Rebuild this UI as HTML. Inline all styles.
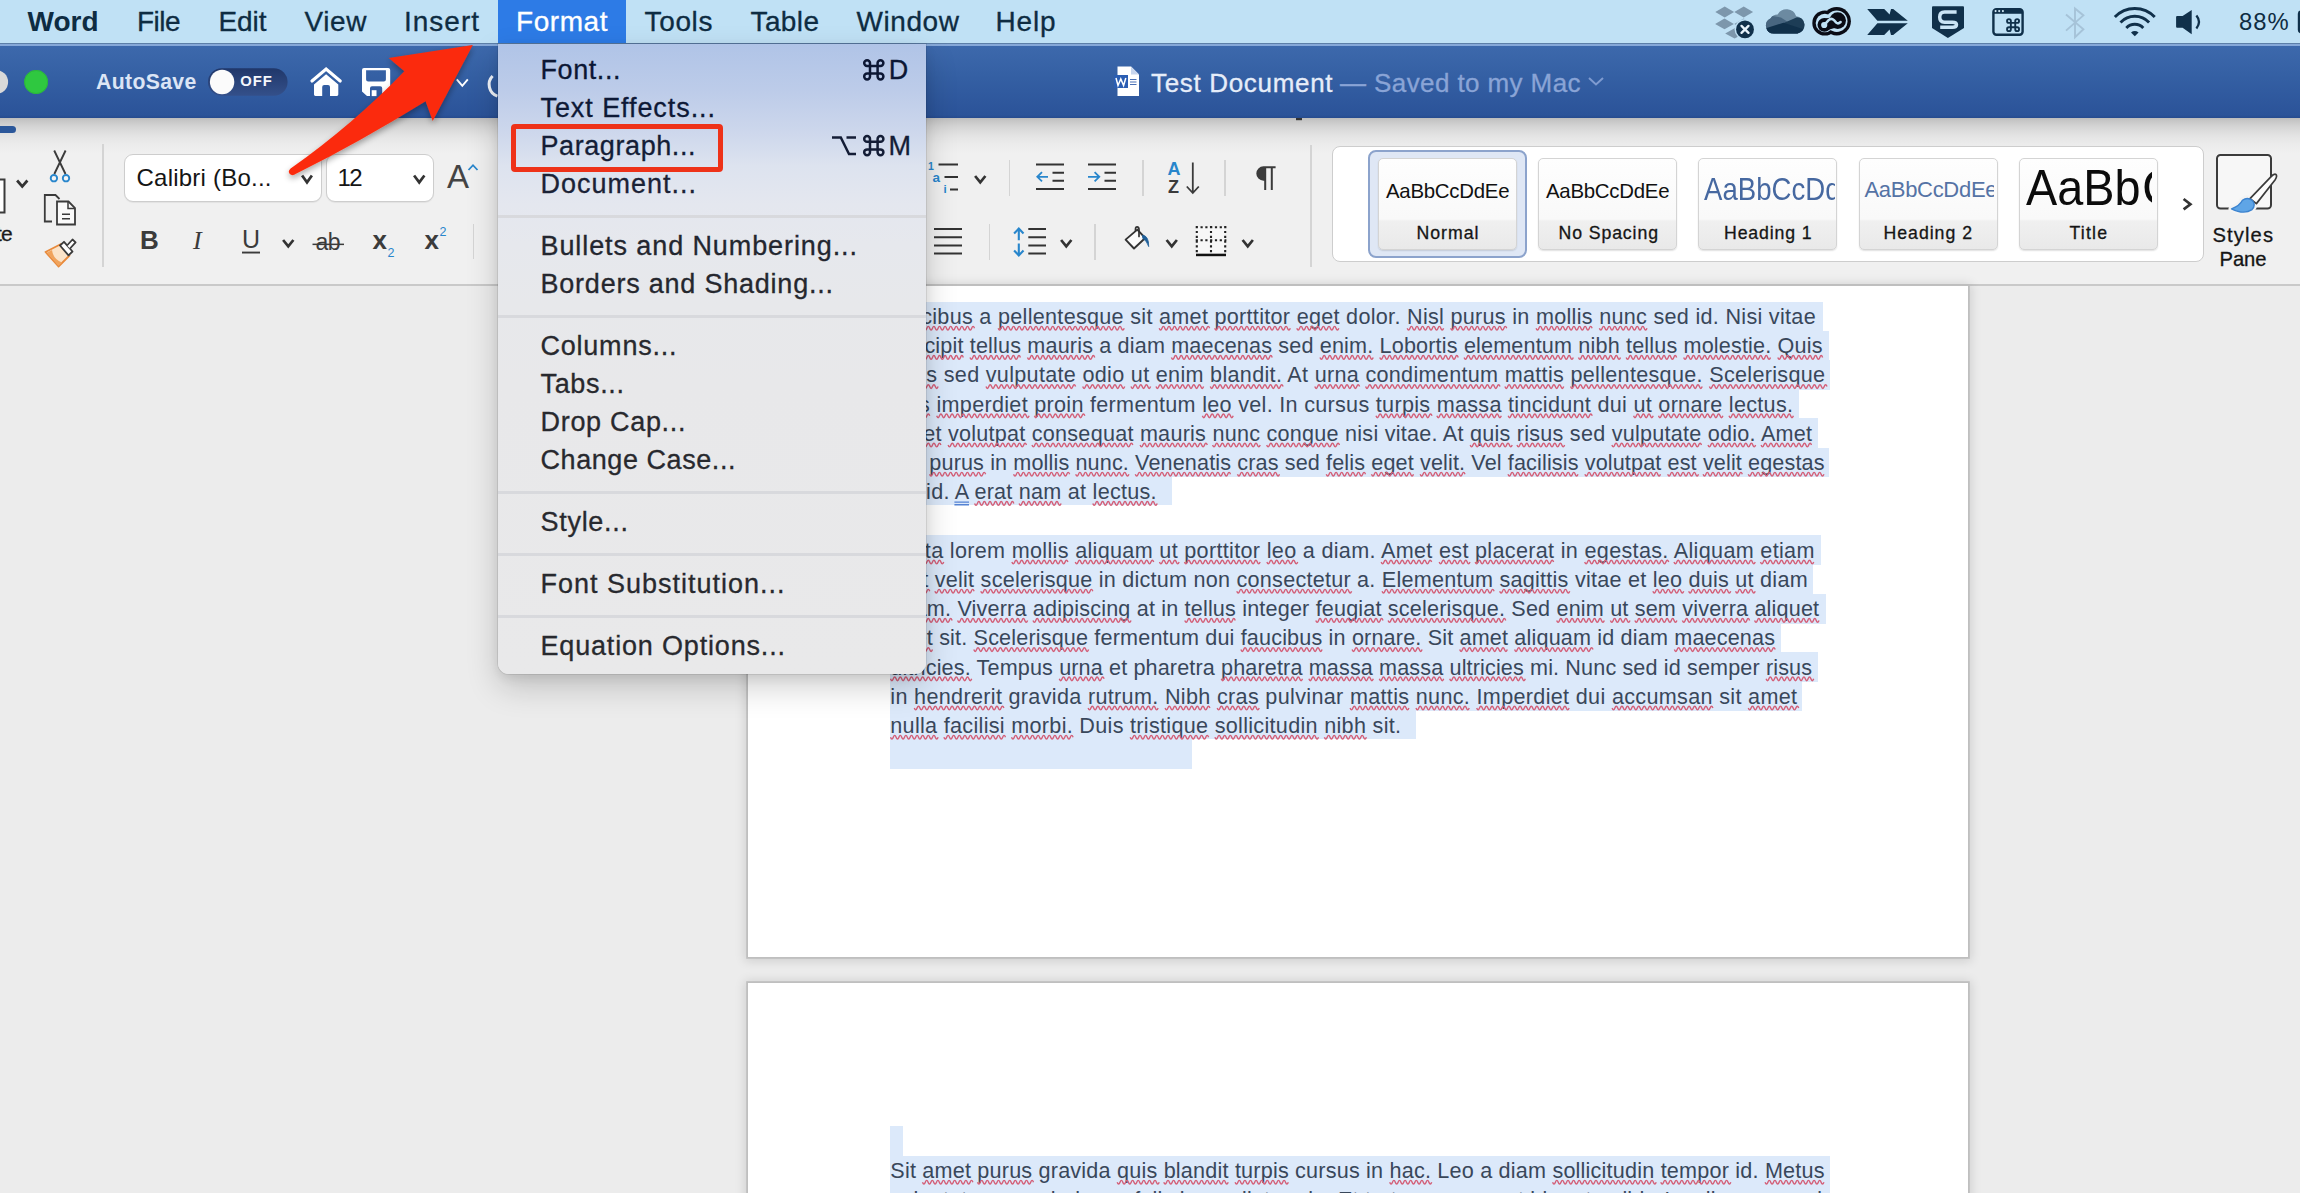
<!DOCTYPE html>
<html lang="en">
<head>
<meta charset="utf-8">
<title>Word - Format menu</title>
<style>
html,body{margin:0;padding:0}
html{width:2300px;height:1193px;overflow:hidden}
body{width:2300px;height:1193px;position:relative;overflow:hidden;background:#ececec;font-family:"Liberation Sans",sans-serif;color:#111}
.abs{position:absolute}
.t{position:absolute;white-space:pre;line-height:1;display:block}
.hv{-webkit-text-stroke:.3px currentColor}
svg{position:absolute;left:0;top:0;overflow:visible}
/* ---------- mac menu bar ---------- */
#menubar{left:0;top:0;width:2300px;height:43px;background:#c0e1f5}
#mb-line1{left:0;top:43px;width:2300px;height:1px;background:#5d7fa8}
#mb-line2{left:0;top:44px;width:2300px;height:2px;background:#86a8d8}
#fmt-hl{left:498px;top:0;width:128px;height:43px;background:#2d7be6}
/* ---------- word title bar ---------- */
#titlebar{left:0;top:46px;width:2300px;height:72px;background:linear-gradient(#3d69ac 0,#345fa3 45%,#2b5399 96%,#264b8e 100%)}
/* ---------- ribbon ---------- */
#ribbon{left:0;top:118px;width:2300px;height:166px;background:linear-gradient(#bdbdbd 0,#c7c7c7 3px,#d3d3d3 8px,#dedede 14px,#e6e6e6 20px,#ececec 27px,#f0f0f0 36px,#f0f0f0 100%)}
#ribbon-line{left:0;top:284px;width:2300px;height:2px;background:#c9c9c9}
.vdiv{position:absolute;width:2px;background:#d4d4d4}
.combo{position:absolute;background:#fff;border:1.5px solid #cdcdcd;border-radius:9px;box-sizing:border-box;box-shadow:0 1px 1px rgba(0,0,0,.06)}
/* ---------- styles gallery ---------- */
#gallery{left:1332px;top:146px;width:872px;height:116px;background:#fff;border:1.5px solid #cdcdcd;border-radius:8px;box-sizing:border-box}
.card{position:absolute;top:158px;width:139px;height:92px;box-sizing:border-box;border:1px solid #d4d4d4;border-radius:5px;background:linear-gradient(#fefefe 0,#f9f9f9 60px,#f0f0f0 62px,#e9e9e9 100%);box-shadow:0 1px 1.5px rgba(0,0,0,.12);overflow:hidden}
#card-ring{left:1368px;top:150px;width:159px;height:108px;box-sizing:border-box;border:2px solid #8ca3cc;border-radius:8px;background:#dfe7f5}
/* ---------- document ---------- */
.page{position:absolute;background:#fff;box-shadow:0 0 0 1.8px #bfbfbf,0 1px 10px 3px rgba(0,0,0,.13)}
.hl{position:absolute;background:#dce9fa}
.doc{color:#39475a}
.doc u{text-decoration:none}
/* ---------- dropdown menu ---------- */
#menu{left:498px;top:44px;width:428px;height:630px;border-radius:0 0 11px 11px;
 background:linear-gradient(#b0c4e7 0,#bdcce9 48px,#cdd7ec 88px,#dde3ef 122px,#e4e7ef 160px,#e6e8ed 200px,#e7e8eb 260px,#e8e8ea 340px,#e9e9ea 100%);
 box-shadow:0 0 0 1px rgba(0,0,0,.08),0 13px 32px rgba(0,0,0,.19),0 4px 11px rgba(0,0,0,.08)}
.sep{position:absolute;left:498px;width:428px;height:3.6px;background:#d8d9dd;margin-top:-.4px}
#redbox{left:511px;top:124px;width:212px;height:48px;box-sizing:border-box;border:5.5px solid #ee3219;border-radius:4px}
</style>
</head>
<body>

<!-- ================= BASE LAYERS ================= -->
<div id="menubar" class="abs"></div>
<div id="fmt-hl" class="abs"></div>
<div id="mb-line1" class="abs"></div>
<div id="mb-line2" class="abs"></div>
<div id="titlebar" class="abs"></div>
<div id="ribbon" class="abs"></div>
<div id="ribbon-line" class="abs"></div>

<!-- ================= DOCUMENT ================= -->
<div class="abs" style="left:0;top:0;width:2300px;height:1193px;overflow:hidden">
<div class="page" style="left:748px;top:286px;width:1220px;height:671px"></div>
<div class="page" style="left:748px;top:983px;width:1220px;height:230px"></div>

<div class="hl" style="left:890px;top:301.6px;width:933.0px;height:29.8px"></div>
<div class="hl" style="left:890px;top:330.8px;width:939.0px;height:29.8px"></div>
<div class="hl" style="left:890px;top:360.0px;width:940.0px;height:29.8px"></div>
<div class="hl" style="left:890px;top:389.2px;width:909.0px;height:29.8px"></div>
<div class="hl" style="left:890px;top:418.4px;width:928.0px;height:29.8px"></div>
<div class="hl" style="left:890px;top:447.6px;width:939.0px;height:29.8px"></div>
<div class="hl" style="left:890px;top:476.8px;width:282.0px;height:28.2px"></div>
<span class="t" style="left:890.30px;top:305.90px;font-size:21.6px;color:#39475a;letter-spacing:0.292px;"><span class="doc"><u>faucibus</u> a <u>pellentesque</u> sit <u>amet</u> <u>porttitor</u> <u>eget</u> dolor. <u>Nisl</u> <u>purus</u> in <u>mollis</u> <u>nunc</u> sed id. Nisi vitae</span></span>
<span class="t" style="left:890.30px;top:335.10px;font-size:21.6px;color:#39475a;letter-spacing:0.162px;"><span class="doc"><u>suscipit</u> <u>tellus</u> <u>mauris</u> a diam <u>maecenas</u> sed <u>enim.</u> <u>Lobortis</u> <u>elementum</u> <u>nibh</u> <u>tellus</u> <u>molestie.</u> <u>Quis</u></span></span>
<span class="t" style="left:890.30px;top:364.30px;font-size:21.6px;color:#39475a;letter-spacing:0.305px;"><span class="doc"><u>risus</u> sed <u>vulputate</u> <u>odio</u> <u>ut</u> <u>enim</u> <u>blandit.</u> At <u>urna</u> <u>condimentum</u> <u>mattis</u> <u>pellentesque.</u> <u>Scelerisque</u></span></span>
<span class="t" style="left:890.30px;top:393.50px;font-size:21.6px;color:#39475a;letter-spacing:0.294px;"><span class="doc"><u>felis</u> <u>imperdiet</u> <u>proin</u> fermentum <u>leo</u> vel. In cursus <u>turpis</u> <u>massa</u> <u>tincidunt</u> dui <u>ut</u> <u>ornare</u> <u>lectus.</u></span></span>
<span class="t" style="left:890.30px;top:422.70px;font-size:21.6px;color:#39475a;letter-spacing:0.245px;"><span class="doc"><u>Amet</u> <u>volutpat</u> <u>consequat</u> <u>mauris</u> <u>nunc</u> <u>congue</u> nisi vitae. At <u>quis</u> <u>risus</u> sed <u>vulputate</u> <u>odio.</u> <u>Amet</u></span></span>
<span class="t" style="left:890.30px;top:451.90px;font-size:21.6px;color:#39475a;letter-spacing:0.130px;"><span class="doc">nisl <u>purus</u> in <u>mollis</u> <u>nunc.</u> <u>Venenatis</u> <u>cras</u> sed <u>felis</u> <u>eget</u> <u>velit.</u> Vel <u>facilisis</u> <u>volutpat</u> <u>est</u> <u>velit</u> <u>egestas</u></span></span>
<span class="t" style="left:890.30px;top:481.10px;font-size:21.6px;color:#39475a;letter-spacing:0.245px;"><span class="doc">dui id. <u class="g">A</u> <u>erat</u> <u>nam</u> at <u>lectus.</u></span></span>
<div class="hl" style="left:890px;top:535.4px;width:931.0px;height:29.8px"></div>
<div class="hl" style="left:890px;top:564.6px;width:923.0px;height:29.8px"></div>
<div class="hl" style="left:890px;top:593.8px;width:936.0px;height:29.8px"></div>
<div class="hl" style="left:890px;top:623.0px;width:891.0px;height:29.8px"></div>
<div class="hl" style="left:890px;top:652.2px;width:928.0px;height:29.8px"></div>
<div class="hl" style="left:890px;top:681.4px;width:912.0px;height:29.8px"></div>
<div class="hl" style="left:890px;top:710.6px;width:526.0px;height:28.2px"></div>
<span class="t" style="left:890.30px;top:539.70px;font-size:21.6px;color:#39475a;letter-spacing:0.317px;"><span class="doc"><u>Porta</u> lorem <u>mollis</u> <u>aliquam</u> <u>ut</u> <u>porttitor</u> <u>leo</u> a diam. <u>Amet</u> <u>est</u> <u>placerat</u> in <u>egestas.</u> <u>Aliquam</u> <u>etiam</u></span></span>
<span class="t" style="left:890.30px;top:568.90px;font-size:21.6px;color:#39475a;letter-spacing:0.242px;"><span class="doc"><u>erat</u> <u>velit</u> <u>scelerisque</u> in dictum non <u>consectetur</u> a. <u>Elementum</u> <u>sagittis</u> vitae et <u>leo</u> <u>duis</u> <u>ut</u> diam</span></span>
<span class="t" style="left:890.30px;top:598.10px;font-size:21.6px;color:#39475a;letter-spacing:0.173px;"><span class="doc"><u>quam.</u> <u>Viverra</u> <u>adipiscing</u> at in <u>tellus</u> integer <u>feugiat</u> <u>scelerisque.</u> Sed <u>enim</u> <u>ut</u> <u>sem</u> <u>viverra</u> <u>aliquet</u></span></span>
<span class="t" style="left:890.30px;top:627.30px;font-size:21.6px;color:#39475a;letter-spacing:0.164px;"><span class="doc"><u>eget</u> sit. <u>Scelerisque</u> fermentum dui <u>faucibus</u> in <u>ornare.</u> Sit <u>amet</u> <u>aliquam</u> id diam <u>maecenas</u></span></span>
<span class="t" style="left:890.30px;top:656.50px;font-size:21.6px;color:#39475a;letter-spacing:0.133px;"><span class="doc"><u>ultricies.</u> Tempus <u>urna</u> et pharetra <u>pharetra</u> <u>massa</u> <u>massa</u> <u>ultricies</u> mi. Nunc sed id semper <u>risus</u></span></span>
<span class="t" style="left:890.30px;top:685.70px;font-size:21.6px;color:#39475a;letter-spacing:0.322px;"><span class="doc">in <u>hendrerit</u> gravida <u>rutrum.</u> <u>Nibh</u> <u>cras</u> pulvinar <u>mattis</u> <u>nunc.</u> <u>Imperdiet</u> dui <u>accumsan</u> sit <u>amet</u></span></span>
<span class="t" style="left:890.30px;top:714.90px;font-size:21.6px;color:#39475a;letter-spacing:0.300px;"><span class="doc"><u>nulla</u> <u>facilisi</u> <u>morbi.</u> Duis <u>tristique</u> <u>sollicitudin</u> <u>nibh</u> sit.</span></span>
<div class="hl" style="left:890px;top:738.5px;width:302px;height:30px"></div>
<div class="hl" style="left:890px;top:1126px;width:13px;height:30px"></div>
<div class="hl" style="left:890px;top:1155.6px;width:940.0px;height:29.8px"></div>
<div class="hl" style="left:890px;top:1184.8px;width:940.0px;height:29.8px"></div>
<span class="t" style="left:890.30px;top:1159.90px;font-size:21.6px;color:#39475a;letter-spacing:0.201px;"><span class="doc">Sit <u>amet</u> <u>purus</u> gravida <u>quis</u> <u>blandit</u> <u>turpis</u> cursus in <u>hac.</u> Leo a diam <u>sollicitudin</u> <u>tempor</u> id. <u>Metus</u></span></span>
<span class="t" style="left:890.30px;top:1189.10px;font-size:21.6px;color:#39475a;letter-spacing:0.197px;"><span class="doc"><u>vulputate</u> eu <u>scelerisque</u> <u>felis</u> <u>imperdiet</u> <u>proin.</u> Et <u>tortor</u> <u>consequat</u> id <u>porta</u> <u>nibh.</u> <u>Iaculis</u> <u>nunc</u> sed</span></span>
<svg width="2300" height="1193" viewBox="0 0 2300 1193"><path d="M890.5 328.2q1.40 3.7 2.8 0t2.8 0t2.8 0t2.8 0t2.8 0t2.8 0t2.8 0t2.8 0t2.8 0t2.8 0t2.8 0t2.8 0t2.8 0t2.8 0t2.8 0t2.8 0t2.8 0t2.8 0t2.8 0t2.8 0t2.8 0t2.8 0t2.8 0t2.8 0t2.8 0t2.8 0t2.8 0t2.8 0t2.8 0t2.8 0M998.2 328.2q1.40 3.7 2.8 0t2.8 0t2.8 0t2.8 0t2.8 0t2.8 0t2.8 0t2.8 0t2.8 0t2.8 0t2.8 0t2.8 0t2.8 0t2.8 0t2.8 0t2.8 0t2.8 0t2.8 0t2.8 0t2.8 0t2.8 0t2.8 0t2.8 0t2.8 0t2.8 0t2.8 0t2.8 0t2.8 0t2.8 0t2.8 0t2.8 0t2.8 0t2.8 0t2.8 0t2.8 0t2.8 0t2.8 0t2.8 0t2.8 0t2.8 0t2.8 0t2.8 0t2.8 0t2.8 0t2.8 0M1159.2 328.2q1.40 3.7 2.8 0t2.8 0t2.8 0t2.8 0t2.8 0t2.8 0t2.8 0t2.8 0t2.8 0t2.8 0t2.8 0t2.8 0t2.8 0t2.8 0t2.8 0t2.8 0t2.8 0t2.8 0M1214.7 328.2q1.40 3.7 2.8 0t2.8 0t2.8 0t2.8 0t2.8 0t2.8 0t2.8 0t2.8 0t2.8 0t2.8 0t2.8 0t2.8 0t2.8 0t2.8 0t2.8 0t2.8 0t2.8 0t2.8 0t2.8 0t2.8 0t2.8 0t2.8 0t2.8 0t2.8 0t2.8 0t2.8 0t2.8 0M1296.8 328.2q1.40 3.7 2.8 0t2.8 0t2.8 0t2.8 0t2.8 0t2.8 0t2.8 0t2.8 0t2.8 0t2.8 0t2.8 0t2.8 0t2.8 0t2.8 0t2.8 0M1407.2 328.2q1.40 3.7 2.8 0t2.8 0t2.8 0t2.8 0t2.8 0t2.8 0t2.8 0t2.8 0t2.8 0t2.8 0t2.8 0t2.8 0t2.8 0M1450.7 328.2q1.40 3.7 2.8 0t2.8 0t2.8 0t2.8 0t2.8 0t2.8 0t2.8 0t2.8 0t2.8 0t2.8 0t2.8 0t2.8 0t2.8 0t2.8 0t2.8 0t2.8 0t2.8 0t2.8 0t2.8 0t2.8 0M1536.1 328.2q1.40 3.7 2.8 0t2.8 0t2.8 0t2.8 0t2.8 0t2.8 0t2.8 0t2.8 0t2.8 0t2.8 0t2.8 0t2.8 0t2.8 0t2.8 0t2.8 0t2.8 0t2.8 0t2.8 0t2.8 0t2.8 0M1599.4 328.2q1.40 3.7 2.8 0t2.8 0t2.8 0t2.8 0t2.8 0t2.8 0t2.8 0t2.8 0t2.8 0t2.8 0t2.8 0t2.8 0t2.8 0t2.8 0t2.8 0t2.8 0t2.8 0M890.5 357.4q1.40 3.7 2.8 0t2.8 0t2.8 0t2.8 0t2.8 0t2.8 0t2.8 0t2.8 0t2.8 0t2.8 0t2.8 0t2.8 0t2.8 0t2.8 0t2.8 0t2.8 0t2.8 0t2.8 0t2.8 0t2.8 0t2.8 0t2.8 0t2.8 0t2.8 0t2.8 0t2.8 0M970.0 357.4q1.40 3.7 2.8 0t2.8 0t2.8 0t2.8 0t2.8 0t2.8 0t2.8 0t2.8 0t2.8 0t2.8 0t2.8 0t2.8 0t2.8 0t2.8 0t2.8 0t2.8 0t2.8 0t2.8 0M1027.5 357.4q1.40 3.7 2.8 0t2.8 0t2.8 0t2.8 0t2.8 0t2.8 0t2.8 0t2.8 0t2.8 0t2.8 0t2.8 0t2.8 0t2.8 0t2.8 0t2.8 0t2.8 0t2.8 0t2.8 0t2.8 0t2.8 0t2.8 0t2.8 0t2.8 0t2.8 0M1171.4 357.4q1.40 3.7 2.8 0t2.8 0t2.8 0t2.8 0t2.8 0t2.8 0t2.8 0t2.8 0t2.8 0t2.8 0t2.8 0t2.8 0t2.8 0t2.8 0t2.8 0t2.8 0t2.8 0t2.8 0t2.8 0t2.8 0t2.8 0t2.8 0t2.8 0t2.8 0t2.8 0t2.8 0t2.8 0t2.8 0t2.8 0t2.8 0t2.8 0t2.8 0t2.8 0t2.8 0t2.8 0t2.8 0M1320.0 357.4q1.40 3.7 2.8 0t2.8 0t2.8 0t2.8 0t2.8 0t2.8 0t2.8 0t2.8 0t2.8 0t2.8 0t2.8 0t2.8 0t2.8 0t2.8 0t2.8 0t2.8 0t2.8 0t2.8 0t2.8 0M1379.8 357.4q1.40 3.7 2.8 0t2.8 0t2.8 0t2.8 0t2.8 0t2.8 0t2.8 0t2.8 0t2.8 0t2.8 0t2.8 0t2.8 0t2.8 0t2.8 0t2.8 0t2.8 0t2.8 0t2.8 0t2.8 0t2.8 0t2.8 0t2.8 0t2.8 0t2.8 0t2.8 0t2.8 0t2.8 0t2.8 0M1464.1 357.4q1.40 3.7 2.8 0t2.8 0t2.8 0t2.8 0t2.8 0t2.8 0t2.8 0t2.8 0t2.8 0t2.8 0t2.8 0t2.8 0t2.8 0t2.8 0t2.8 0t2.8 0t2.8 0t2.8 0t2.8 0t2.8 0t2.8 0t2.8 0t2.8 0t2.8 0t2.8 0t2.8 0t2.8 0t2.8 0t2.8 0t2.8 0t2.8 0t2.8 0t2.8 0t2.8 0t2.8 0t2.8 0t2.8 0t2.8 0t2.8 0M1578.5 357.4q1.40 3.7 2.8 0t2.8 0t2.8 0t2.8 0t2.8 0t2.8 0t2.8 0t2.8 0t2.8 0t2.8 0t2.8 0t2.8 0t2.8 0t2.8 0t2.8 0M1626.2 357.4q1.40 3.7 2.8 0t2.8 0t2.8 0t2.8 0t2.8 0t2.8 0t2.8 0t2.8 0t2.8 0t2.8 0t2.8 0t2.8 0t2.8 0t2.8 0t2.8 0t2.8 0t2.8 0t2.8 0M1683.7 357.4q1.40 3.7 2.8 0t2.8 0t2.8 0t2.8 0t2.8 0t2.8 0t2.8 0t2.8 0t2.8 0t2.8 0t2.8 0t2.8 0t2.8 0t2.8 0t2.8 0t2.8 0t2.8 0t2.8 0t2.8 0t2.8 0t2.8 0t2.8 0t2.8 0t2.8 0t2.8 0t2.8 0t2.8 0t2.8 0t2.8 0t2.8 0t2.8 0M1777.8 357.4q1.40 3.7 2.8 0t2.8 0t2.8 0t2.8 0t2.8 0t2.8 0t2.8 0t2.8 0t2.8 0t2.8 0t2.8 0t2.8 0t2.8 0t2.8 0t2.8 0t2.8 0M890.5 386.6q1.40 3.7 2.8 0t2.8 0t2.8 0t2.8 0t2.8 0t2.8 0t2.8 0t2.8 0t2.8 0t2.8 0t2.8 0t2.8 0t2.8 0t2.8 0t2.8 0t2.8 0t2.8 0M986.0 386.6q1.40 3.7 2.8 0t2.8 0t2.8 0t2.8 0t2.8 0t2.8 0t2.8 0t2.8 0t2.8 0t2.8 0t2.8 0t2.8 0t2.8 0t2.8 0t2.8 0t2.8 0t2.8 0t2.8 0t2.8 0t2.8 0t2.8 0t2.8 0t2.8 0t2.8 0t2.8 0t2.8 0t2.8 0t2.8 0t2.8 0t2.8 0t2.8 0t2.8 0M1082.7 386.6q1.40 3.7 2.8 0t2.8 0t2.8 0t2.8 0t2.8 0t2.8 0t2.8 0t2.8 0t2.8 0t2.8 0t2.8 0t2.8 0t2.8 0t2.8 0t2.8 0M1131.0 386.6q1.40 3.7 2.8 0t2.8 0t2.8 0t2.8 0t2.8 0t2.8 0t2.8 0M1156.0 386.6q1.40 3.7 2.8 0t2.8 0t2.8 0t2.8 0t2.8 0t2.8 0t2.8 0t2.8 0t2.8 0t2.8 0t2.8 0t2.8 0t2.8 0t2.8 0t2.8 0t2.8 0t2.8 0M1210.3 386.6q1.40 3.7 2.8 0t2.8 0t2.8 0t2.8 0t2.8 0t2.8 0t2.8 0t2.8 0t2.8 0t2.8 0t2.8 0t2.8 0t2.8 0t2.8 0t2.8 0t2.8 0t2.8 0t2.8 0t2.8 0t2.8 0t2.8 0t2.8 0t2.8 0t2.8 0t2.8 0t2.8 0M1314.8 386.6q1.40 3.7 2.8 0t2.8 0t2.8 0t2.8 0t2.8 0t2.8 0t2.8 0t2.8 0t2.8 0t2.8 0t2.8 0t2.8 0t2.8 0t2.8 0t2.8 0t2.8 0M1365.6 386.6q1.40 3.7 2.8 0t2.8 0t2.8 0t2.8 0t2.8 0t2.8 0t2.8 0t2.8 0t2.8 0t2.8 0t2.8 0t2.8 0t2.8 0t2.8 0t2.8 0t2.8 0t2.8 0t2.8 0t2.8 0t2.8 0t2.8 0t2.8 0t2.8 0t2.8 0t2.8 0t2.8 0t2.8 0t2.8 0t2.8 0t2.8 0t2.8 0t2.8 0t2.8 0t2.8 0t2.8 0t2.8 0t2.8 0t2.8 0t2.8 0t2.8 0t2.8 0t2.8 0t2.8 0t2.8 0t2.8 0t2.8 0t2.8 0t2.8 0M1504.9 386.6q1.40 3.7 2.8 0t2.8 0t2.8 0t2.8 0t2.8 0t2.8 0t2.8 0t2.8 0t2.8 0t2.8 0t2.8 0t2.8 0t2.8 0t2.8 0t2.8 0t2.8 0t2.8 0t2.8 0t2.8 0t2.8 0t2.8 0M1570.6 386.6q1.40 3.7 2.8 0t2.8 0t2.8 0t2.8 0t2.8 0t2.8 0t2.8 0t2.8 0t2.8 0t2.8 0t2.8 0t2.8 0t2.8 0t2.8 0t2.8 0t2.8 0t2.8 0t2.8 0t2.8 0t2.8 0t2.8 0t2.8 0t2.8 0t2.8 0t2.8 0t2.8 0t2.8 0t2.8 0t2.8 0t2.8 0t2.8 0t2.8 0t2.8 0t2.8 0t2.8 0t2.8 0t2.8 0t2.8 0t2.8 0t2.8 0t2.8 0t2.8 0t2.8 0t2.8 0t2.8 0t2.8 0t2.8 0M1709.4 386.6q1.40 3.7 2.8 0t2.8 0t2.8 0t2.8 0t2.8 0t2.8 0t2.8 0t2.8 0t2.8 0t2.8 0t2.8 0t2.8 0t2.8 0t2.8 0t2.8 0t2.8 0t2.8 0t2.8 0t2.8 0t2.8 0t2.8 0t2.8 0t2.8 0t2.8 0t2.8 0t2.8 0t2.8 0t2.8 0t2.8 0t2.8 0t2.8 0t2.8 0t2.8 0t2.8 0t2.8 0t2.8 0t2.8 0t2.8 0t2.8 0t2.8 0t2.8 0t2.8 0M890.5 415.8q1.40 3.7 2.8 0t2.8 0t2.8 0t2.8 0t2.8 0t2.8 0t2.8 0t2.8 0t2.8 0t2.8 0t2.8 0t2.8 0t2.8 0t2.8 0M936.7 415.8q1.40 3.7 2.8 0t2.8 0t2.8 0t2.8 0t2.8 0t2.8 0t2.8 0t2.8 0t2.8 0t2.8 0t2.8 0t2.8 0t2.8 0t2.8 0t2.8 0t2.8 0t2.8 0t2.8 0t2.8 0t2.8 0t2.8 0t2.8 0t2.8 0t2.8 0t2.8 0t2.8 0t2.8 0t2.8 0t2.8 0t2.8 0t2.8 0t2.8 0t2.8 0M1034.4 415.8q1.40 3.7 2.8 0t2.8 0t2.8 0t2.8 0t2.8 0t2.8 0t2.8 0t2.8 0t2.8 0t2.8 0t2.8 0t2.8 0t2.8 0t2.8 0t2.8 0t2.8 0t2.8 0t2.8 0M1202.4 415.8q1.40 3.7 2.8 0t2.8 0t2.8 0t2.8 0t2.8 0t2.8 0t2.8 0t2.8 0t2.8 0t2.8 0t2.8 0M1376.0 415.8q1.40 3.7 2.8 0t2.8 0t2.8 0t2.8 0t2.8 0t2.8 0t2.8 0t2.8 0t2.8 0t2.8 0t2.8 0t2.8 0t2.8 0t2.8 0t2.8 0t2.8 0t2.8 0t2.8 0t2.8 0t2.8 0M1436.9 415.8q1.40 3.7 2.8 0t2.8 0t2.8 0t2.8 0t2.8 0t2.8 0t2.8 0t2.8 0t2.8 0t2.8 0t2.8 0t2.8 0t2.8 0t2.8 0t2.8 0t2.8 0t2.8 0t2.8 0t2.8 0t2.8 0t2.8 0t2.8 0t2.8 0M1508.2 415.8q1.40 3.7 2.8 0t2.8 0t2.8 0t2.8 0t2.8 0t2.8 0t2.8 0t2.8 0t2.8 0t2.8 0t2.8 0t2.8 0t2.8 0t2.8 0t2.8 0t2.8 0t2.8 0t2.8 0t2.8 0t2.8 0t2.8 0t2.8 0t2.8 0t2.8 0t2.8 0t2.8 0t2.8 0t2.8 0t2.8 0t2.8 0M1633.6 415.8q1.40 3.7 2.8 0t2.8 0t2.8 0t2.8 0t2.8 0t2.8 0t2.8 0M1658.5 415.8q1.40 3.7 2.8 0t2.8 0t2.8 0t2.8 0t2.8 0t2.8 0t2.8 0t2.8 0t2.8 0t2.8 0t2.8 0t2.8 0t2.8 0t2.8 0t2.8 0t2.8 0t2.8 0t2.8 0t2.8 0t2.8 0t2.8 0t2.8 0t2.8 0M1729.0 415.8q1.40 3.7 2.8 0t2.8 0t2.8 0t2.8 0t2.8 0t2.8 0t2.8 0t2.8 0t2.8 0t2.8 0t2.8 0t2.8 0t2.8 0t2.8 0t2.8 0t2.8 0t2.8 0t2.8 0t2.8 0t2.8 0t2.8 0t2.8 0t2.8 0M890.5 445.0q1.40 3.7 2.8 0t2.8 0t2.8 0t2.8 0t2.8 0t2.8 0t2.8 0t2.8 0t2.8 0t2.8 0t2.8 0t2.8 0t2.8 0t2.8 0t2.8 0t2.8 0t2.8 0t2.8 0M948.1 445.0q1.40 3.7 2.8 0t2.8 0t2.8 0t2.8 0t2.8 0t2.8 0t2.8 0t2.8 0t2.8 0t2.8 0t2.8 0t2.8 0t2.8 0t2.8 0t2.8 0t2.8 0t2.8 0t2.8 0t2.8 0t2.8 0t2.8 0t2.8 0t2.8 0t2.8 0t2.8 0t2.8 0t2.8 0t2.8 0M1032.0 445.0q1.40 3.7 2.8 0t2.8 0t2.8 0t2.8 0t2.8 0t2.8 0t2.8 0t2.8 0t2.8 0t2.8 0t2.8 0t2.8 0t2.8 0t2.8 0t2.8 0t2.8 0t2.8 0t2.8 0t2.8 0t2.8 0t2.8 0t2.8 0t2.8 0t2.8 0t2.8 0t2.8 0t2.8 0t2.8 0t2.8 0t2.8 0t2.8 0t2.8 0t2.8 0t2.8 0t2.8 0t2.8 0M1140.1 445.0q1.40 3.7 2.8 0t2.8 0t2.8 0t2.8 0t2.8 0t2.8 0t2.8 0t2.8 0t2.8 0t2.8 0t2.8 0t2.8 0t2.8 0t2.8 0t2.8 0t2.8 0t2.8 0t2.8 0t2.8 0t2.8 0t2.8 0t2.8 0t2.8 0t2.8 0M1212.6 445.0q1.40 3.7 2.8 0t2.8 0t2.8 0t2.8 0t2.8 0t2.8 0t2.8 0t2.8 0t2.8 0t2.8 0t2.8 0t2.8 0t2.8 0t2.8 0t2.8 0t2.8 0t2.8 0M1266.7 445.0q1.40 3.7 2.8 0t2.8 0t2.8 0t2.8 0t2.8 0t2.8 0t2.8 0t2.8 0t2.8 0t2.8 0t2.8 0t2.8 0t2.8 0t2.8 0t2.8 0t2.8 0t2.8 0t2.8 0t2.8 0t2.8 0t2.8 0t2.8 0t2.8 0t2.8 0t2.8 0t2.8 0M1470.2 445.0q1.40 3.7 2.8 0t2.8 0t2.8 0t2.8 0t2.8 0t2.8 0t2.8 0t2.8 0t2.8 0t2.8 0t2.8 0t2.8 0t2.8 0t2.8 0t2.8 0M1517.0 445.0q1.40 3.7 2.8 0t2.8 0t2.8 0t2.8 0t2.8 0t2.8 0t2.8 0t2.8 0t2.8 0t2.8 0t2.8 0t2.8 0t2.8 0t2.8 0t2.8 0t2.8 0t2.8 0M1611.9 445.0q1.40 3.7 2.8 0t2.8 0t2.8 0t2.8 0t2.8 0t2.8 0t2.8 0t2.8 0t2.8 0t2.8 0t2.8 0t2.8 0t2.8 0t2.8 0t2.8 0t2.8 0t2.8 0t2.8 0t2.8 0t2.8 0t2.8 0t2.8 0t2.8 0t2.8 0t2.8 0t2.8 0t2.8 0t2.8 0t2.8 0t2.8 0t2.8 0t2.8 0M1708.0 445.0q1.40 3.7 2.8 0t2.8 0t2.8 0t2.8 0t2.8 0t2.8 0t2.8 0t2.8 0t2.8 0t2.8 0t2.8 0t2.8 0t2.8 0t2.8 0t2.8 0t2.8 0t2.8 0M1761.1 445.0q1.40 3.7 2.8 0t2.8 0t2.8 0t2.8 0t2.8 0t2.8 0t2.8 0t2.8 0t2.8 0t2.8 0t2.8 0t2.8 0t2.8 0t2.8 0t2.8 0t2.8 0t2.8 0t2.8 0M929.6 474.2q1.40 3.7 2.8 0t2.8 0t2.8 0t2.8 0t2.8 0t2.8 0t2.8 0t2.8 0t2.8 0t2.8 0t2.8 0t2.8 0t2.8 0t2.8 0t2.8 0t2.8 0t2.8 0t2.8 0t2.8 0t2.8 0M1013.6 474.2q1.40 3.7 2.8 0t2.8 0t2.8 0t2.8 0t2.8 0t2.8 0t2.8 0t2.8 0t2.8 0t2.8 0t2.8 0t2.8 0t2.8 0t2.8 0t2.8 0t2.8 0t2.8 0t2.8 0t2.8 0t2.8 0M1075.7 474.2q1.40 3.7 2.8 0t2.8 0t2.8 0t2.8 0t2.8 0t2.8 0t2.8 0t2.8 0t2.8 0t2.8 0t2.8 0t2.8 0t2.8 0t2.8 0t2.8 0t2.8 0t2.8 0t2.8 0t2.8 0M1135.3 474.2q1.40 3.7 2.8 0t2.8 0t2.8 0t2.8 0t2.8 0t2.8 0t2.8 0t2.8 0t2.8 0t2.8 0t2.8 0t2.8 0t2.8 0t2.8 0t2.8 0t2.8 0t2.8 0t2.8 0t2.8 0t2.8 0t2.8 0t2.8 0t2.8 0t2.8 0t2.8 0t2.8 0t2.8 0t2.8 0t2.8 0t2.8 0t2.8 0t2.8 0t2.8 0t2.8 0M1237.5 474.2q1.40 3.7 2.8 0t2.8 0t2.8 0t2.8 0t2.8 0t2.8 0t2.8 0t2.8 0t2.8 0t2.8 0t2.8 0t2.8 0t2.8 0t2.8 0t2.8 0M1326.3 474.2q1.40 3.7 2.8 0t2.8 0t2.8 0t2.8 0t2.8 0t2.8 0t2.8 0t2.8 0t2.8 0t2.8 0t2.8 0t2.8 0t2.8 0t2.8 0M1371.5 474.2q1.40 3.7 2.8 0t2.8 0t2.8 0t2.8 0t2.8 0t2.8 0t2.8 0t2.8 0t2.8 0t2.8 0t2.8 0t2.8 0t2.8 0t2.8 0t2.8 0M1420.2 474.2q1.40 3.7 2.8 0t2.8 0t2.8 0t2.8 0t2.8 0t2.8 0t2.8 0t2.8 0t2.8 0t2.8 0t2.8 0t2.8 0t2.8 0t2.8 0t2.8 0t2.8 0M1508.0 474.2q1.40 3.7 2.8 0t2.8 0t2.8 0t2.8 0t2.8 0t2.8 0t2.8 0t2.8 0t2.8 0t2.8 0t2.8 0t2.8 0t2.8 0t2.8 0t2.8 0t2.8 0t2.8 0t2.8 0t2.8 0t2.8 0t2.8 0t2.8 0t2.8 0t2.8 0t2.8 0M1584.9 474.2q1.40 3.7 2.8 0t2.8 0t2.8 0t2.8 0t2.8 0t2.8 0t2.8 0t2.8 0t2.8 0t2.8 0t2.8 0t2.8 0t2.8 0t2.8 0t2.8 0t2.8 0t2.8 0t2.8 0t2.8 0t2.8 0t2.8 0t2.8 0t2.8 0t2.8 0t2.8 0t2.8 0t2.8 0M1667.7 474.2q1.40 3.7 2.8 0t2.8 0t2.8 0t2.8 0t2.8 0t2.8 0t2.8 0t2.8 0t2.8 0t2.8 0t2.8 0M1703.1 474.2q1.40 3.7 2.8 0t2.8 0t2.8 0t2.8 0t2.8 0t2.8 0t2.8 0t2.8 0t2.8 0t2.8 0t2.8 0t2.8 0t2.8 0t2.8 0M1748.3 474.2q1.40 3.7 2.8 0t2.8 0t2.8 0t2.8 0t2.8 0t2.8 0t2.8 0t2.8 0t2.8 0t2.8 0t2.8 0t2.8 0t2.8 0t2.8 0t2.8 0t2.8 0t2.8 0t2.8 0t2.8 0t2.8 0t2.8 0t2.8 0t2.8 0t2.8 0t2.8 0t2.8 0t2.8 0M974.6 503.4q1.40 3.7 2.8 0t2.8 0t2.8 0t2.8 0t2.8 0t2.8 0t2.8 0t2.8 0t2.8 0t2.8 0t2.8 0t2.8 0t2.8 0t2.8 0M1019.1 503.4q1.40 3.7 2.8 0t2.8 0t2.8 0t2.8 0t2.8 0t2.8 0t2.8 0t2.8 0t2.8 0t2.8 0t2.8 0t2.8 0t2.8 0t2.8 0t2.8 0M1092.8 503.4q1.40 3.7 2.8 0t2.8 0t2.8 0t2.8 0t2.8 0t2.8 0t2.8 0t2.8 0t2.8 0t2.8 0t2.8 0t2.8 0t2.8 0t2.8 0t2.8 0t2.8 0t2.8 0t2.8 0t2.8 0t2.8 0t2.8 0t2.8 0t2.8 0M890.5 562.0q1.40 3.7 2.8 0t2.8 0t2.8 0t2.8 0t2.8 0t2.8 0t2.8 0t2.8 0t2.8 0t2.8 0t2.8 0t2.8 0t2.8 0t2.8 0t2.8 0t2.8 0t2.8 0t2.8 0t2.8 0M1011.9 562.0q1.40 3.7 2.8 0t2.8 0t2.8 0t2.8 0t2.8 0t2.8 0t2.8 0t2.8 0t2.8 0t2.8 0t2.8 0t2.8 0t2.8 0t2.8 0t2.8 0t2.8 0t2.8 0t2.8 0t2.8 0t2.8 0M1075.3 562.0q1.40 3.7 2.8 0t2.8 0t2.8 0t2.8 0t2.8 0t2.8 0t2.8 0t2.8 0t2.8 0t2.8 0t2.8 0t2.8 0t2.8 0t2.8 0t2.8 0t2.8 0t2.8 0t2.8 0t2.8 0t2.8 0t2.8 0t2.8 0t2.8 0t2.8 0t2.8 0t2.8 0t2.8 0t2.8 0M1159.5 562.0q1.40 3.7 2.8 0t2.8 0t2.8 0t2.8 0t2.8 0t2.8 0t2.8 0M1184.5 562.0q1.40 3.7 2.8 0t2.8 0t2.8 0t2.8 0t2.8 0t2.8 0t2.8 0t2.8 0t2.8 0t2.8 0t2.8 0t2.8 0t2.8 0t2.8 0t2.8 0t2.8 0t2.8 0t2.8 0t2.8 0t2.8 0t2.8 0t2.8 0t2.8 0t2.8 0t2.8 0t2.8 0t2.8 0M1266.9 562.0q1.40 3.7 2.8 0t2.8 0t2.8 0t2.8 0t2.8 0t2.8 0t2.8 0t2.8 0t2.8 0t2.8 0t2.8 0M1381.2 562.0q1.40 3.7 2.8 0t2.8 0t2.8 0t2.8 0t2.8 0t2.8 0t2.8 0t2.8 0t2.8 0t2.8 0t2.8 0t2.8 0t2.8 0t2.8 0t2.8 0t2.8 0t2.8 0t2.8 0M1439.2 562.0q1.40 3.7 2.8 0t2.8 0t2.8 0t2.8 0t2.8 0t2.8 0t2.8 0t2.8 0t2.8 0t2.8 0t2.8 0M1475.2 562.0q1.40 3.7 2.8 0t2.8 0t2.8 0t2.8 0t2.8 0t2.8 0t2.8 0t2.8 0t2.8 0t2.8 0t2.8 0t2.8 0t2.8 0t2.8 0t2.8 0t2.8 0t2.8 0t2.8 0t2.8 0t2.8 0t2.8 0t2.8 0t2.8 0t2.8 0t2.8 0t2.8 0t2.8 0t2.8 0M1584.7 562.0q1.40 3.7 2.8 0t2.8 0t2.8 0t2.8 0t2.8 0t2.8 0t2.8 0t2.8 0t2.8 0t2.8 0t2.8 0t2.8 0t2.8 0t2.8 0t2.8 0t2.8 0t2.8 0t2.8 0t2.8 0t2.8 0t2.8 0t2.8 0t2.8 0t2.8 0t2.8 0t2.8 0t2.8 0t2.8 0t2.8 0t2.8 0M1674.0 562.0q1.40 3.7 2.8 0t2.8 0t2.8 0t2.8 0t2.8 0t2.8 0t2.8 0t2.8 0t2.8 0t2.8 0t2.8 0t2.8 0t2.8 0t2.8 0t2.8 0t2.8 0t2.8 0t2.8 0t2.8 0t2.8 0t2.8 0t2.8 0t2.8 0t2.8 0t2.8 0t2.8 0t2.8 0t2.8 0t2.8 0M1760.5 562.0q1.40 3.7 2.8 0t2.8 0t2.8 0t2.8 0t2.8 0t2.8 0t2.8 0t2.8 0t2.8 0t2.8 0t2.8 0t2.8 0t2.8 0t2.8 0t2.8 0t2.8 0t2.8 0t2.8 0t2.8 0M890.5 591.2q1.40 3.7 2.8 0t2.8 0t2.8 0t2.8 0t2.8 0t2.8 0t2.8 0t2.8 0t2.8 0t2.8 0t2.8 0t2.8 0t2.8 0t2.8 0M934.9 591.2q1.40 3.7 2.8 0t2.8 0t2.8 0t2.8 0t2.8 0t2.8 0t2.8 0t2.8 0t2.8 0t2.8 0t2.8 0t2.8 0t2.8 0t2.8 0M980.8 591.2q1.40 3.7 2.8 0t2.8 0t2.8 0t2.8 0t2.8 0t2.8 0t2.8 0t2.8 0t2.8 0t2.8 0t2.8 0t2.8 0t2.8 0t2.8 0t2.8 0t2.8 0t2.8 0t2.8 0t2.8 0t2.8 0t2.8 0t2.8 0t2.8 0t2.8 0t2.8 0t2.8 0t2.8 0t2.8 0t2.8 0t2.8 0t2.8 0t2.8 0t2.8 0t2.8 0t2.8 0t2.8 0t2.8 0t2.8 0t2.8 0t2.8 0M1236.8 591.2q1.40 3.7 2.8 0t2.8 0t2.8 0t2.8 0t2.8 0t2.8 0t2.8 0t2.8 0t2.8 0t2.8 0t2.8 0t2.8 0t2.8 0t2.8 0t2.8 0t2.8 0t2.8 0t2.8 0t2.8 0t2.8 0t2.8 0t2.8 0t2.8 0t2.8 0t2.8 0t2.8 0t2.8 0t2.8 0t2.8 0t2.8 0t2.8 0t2.8 0t2.8 0t2.8 0t2.8 0t2.8 0t2.8 0t2.8 0t2.8 0t2.8 0t2.8 0M1382.1 591.2q1.40 3.7 2.8 0t2.8 0t2.8 0t2.8 0t2.8 0t2.8 0t2.8 0t2.8 0t2.8 0t2.8 0t2.8 0t2.8 0t2.8 0t2.8 0t2.8 0t2.8 0t2.8 0t2.8 0t2.8 0t2.8 0t2.8 0t2.8 0t2.8 0t2.8 0t2.8 0t2.8 0t2.8 0t2.8 0t2.8 0t2.8 0t2.8 0t2.8 0t2.8 0t2.8 0t2.8 0t2.8 0t2.8 0t2.8 0t2.8 0t2.8 0M1499.7 591.2q1.40 3.7 2.8 0t2.8 0t2.8 0t2.8 0t2.8 0t2.8 0t2.8 0t2.8 0t2.8 0t2.8 0t2.8 0t2.8 0t2.8 0t2.8 0t2.8 0t2.8 0t2.8 0t2.8 0t2.8 0t2.8 0t2.8 0t2.8 0t2.8 0t2.8 0t2.8 0M1652.9 591.2q1.40 3.7 2.8 0t2.8 0t2.8 0t2.8 0t2.8 0t2.8 0t2.8 0t2.8 0t2.8 0t2.8 0t2.8 0M1688.7 591.2q1.40 3.7 2.8 0t2.8 0t2.8 0t2.8 0t2.8 0t2.8 0t2.8 0t2.8 0t2.8 0t2.8 0t2.8 0t2.8 0t2.8 0t2.8 0t2.8 0M1735.6 591.2q1.40 3.7 2.8 0t2.8 0t2.8 0t2.8 0t2.8 0t2.8 0t2.8 0M890.5 620.4q1.40 3.7 2.8 0t2.8 0t2.8 0t2.8 0t2.8 0t2.8 0t2.8 0t2.8 0t2.8 0t2.8 0t2.8 0t2.8 0t2.8 0t2.8 0t2.8 0t2.8 0t2.8 0t2.8 0t2.8 0t2.8 0t2.8 0t2.8 0M957.6 620.4q1.40 3.7 2.8 0t2.8 0t2.8 0t2.8 0t2.8 0t2.8 0t2.8 0t2.8 0t2.8 0t2.8 0t2.8 0t2.8 0t2.8 0t2.8 0t2.8 0t2.8 0t2.8 0t2.8 0t2.8 0t2.8 0t2.8 0t2.8 0t2.8 0t2.8 0t2.8 0M1033.0 620.4q1.40 3.7 2.8 0t2.8 0t2.8 0t2.8 0t2.8 0t2.8 0t2.8 0t2.8 0t2.8 0t2.8 0t2.8 0t2.8 0t2.8 0t2.8 0t2.8 0t2.8 0t2.8 0t2.8 0t2.8 0t2.8 0t2.8 0t2.8 0t2.8 0t2.8 0t2.8 0t2.8 0t2.8 0t2.8 0t2.8 0t2.8 0t2.8 0t2.8 0t2.8 0t2.8 0t2.8 0M1184.8 620.4q1.40 3.7 2.8 0t2.8 0t2.8 0t2.8 0t2.8 0t2.8 0t2.8 0t2.8 0t2.8 0t2.8 0t2.8 0t2.8 0t2.8 0t2.8 0t2.8 0t2.8 0t2.8 0t2.8 0M1315.8 620.4q1.40 3.7 2.8 0t2.8 0t2.8 0t2.8 0t2.8 0t2.8 0t2.8 0t2.8 0t2.8 0t2.8 0t2.8 0t2.8 0t2.8 0t2.8 0t2.8 0t2.8 0t2.8 0t2.8 0t2.8 0t2.8 0t2.8 0t2.8 0t2.8 0t2.8 0M1388.1 620.4q1.40 3.7 2.8 0t2.8 0t2.8 0t2.8 0t2.8 0t2.8 0t2.8 0t2.8 0t2.8 0t2.8 0t2.8 0t2.8 0t2.8 0t2.8 0t2.8 0t2.8 0t2.8 0t2.8 0t2.8 0t2.8 0t2.8 0t2.8 0t2.8 0t2.8 0t2.8 0t2.8 0t2.8 0t2.8 0t2.8 0t2.8 0t2.8 0t2.8 0t2.8 0t2.8 0t2.8 0t2.8 0t2.8 0t2.8 0t2.8 0t2.8 0t2.8 0t2.8 0M1556.7 620.4q1.40 3.7 2.8 0t2.8 0t2.8 0t2.8 0t2.8 0t2.8 0t2.8 0t2.8 0t2.8 0t2.8 0t2.8 0t2.8 0t2.8 0t2.8 0t2.8 0t2.8 0t2.8 0M1610.4 620.4q1.40 3.7 2.8 0t2.8 0t2.8 0t2.8 0t2.8 0t2.8 0t2.8 0M1634.9 620.4q1.40 3.7 2.8 0t2.8 0t2.8 0t2.8 0t2.8 0t2.8 0t2.8 0t2.8 0t2.8 0t2.8 0t2.8 0t2.8 0t2.8 0t2.8 0t2.8 0M1682.4 620.4q1.40 3.7 2.8 0t2.8 0t2.8 0t2.8 0t2.8 0t2.8 0t2.8 0t2.8 0t2.8 0t2.8 0t2.8 0t2.8 0t2.8 0t2.8 0t2.8 0t2.8 0t2.8 0t2.8 0t2.8 0t2.8 0t2.8 0t2.8 0t2.8 0t2.8 0M1754.6 620.4q1.40 3.7 2.8 0t2.8 0t2.8 0t2.8 0t2.8 0t2.8 0t2.8 0t2.8 0t2.8 0t2.8 0t2.8 0t2.8 0t2.8 0t2.8 0t2.8 0t2.8 0t2.8 0t2.8 0t2.8 0t2.8 0t2.8 0t2.8 0t2.8 0M890.5 649.6q1.40 3.7 2.8 0t2.8 0t2.8 0t2.8 0t2.8 0t2.8 0t2.8 0t2.8 0t2.8 0t2.8 0t2.8 0t2.8 0t2.8 0t2.8 0t2.8 0M973.8 649.6q1.40 3.7 2.8 0t2.8 0t2.8 0t2.8 0t2.8 0t2.8 0t2.8 0t2.8 0t2.8 0t2.8 0t2.8 0t2.8 0t2.8 0t2.8 0t2.8 0t2.8 0t2.8 0t2.8 0t2.8 0t2.8 0t2.8 0t2.8 0t2.8 0t2.8 0t2.8 0t2.8 0t2.8 0t2.8 0t2.8 0t2.8 0t2.8 0t2.8 0t2.8 0t2.8 0t2.8 0t2.8 0t2.8 0t2.8 0t2.8 0t2.8 0t2.8 0M1240.9 649.6q1.40 3.7 2.8 0t2.8 0t2.8 0t2.8 0t2.8 0t2.8 0t2.8 0t2.8 0t2.8 0t2.8 0t2.8 0t2.8 0t2.8 0t2.8 0t2.8 0t2.8 0t2.8 0t2.8 0t2.8 0t2.8 0t2.8 0t2.8 0t2.8 0t2.8 0t2.8 0t2.8 0t2.8 0t2.8 0t2.8 0M1352.1 649.6q1.40 3.7 2.8 0t2.8 0t2.8 0t2.8 0t2.8 0t2.8 0t2.8 0t2.8 0t2.8 0t2.8 0t2.8 0t2.8 0t2.8 0t2.8 0t2.8 0t2.8 0t2.8 0t2.8 0t2.8 0t2.8 0t2.8 0t2.8 0t2.8 0t2.8 0t2.8 0M1459.7 649.6q1.40 3.7 2.8 0t2.8 0t2.8 0t2.8 0t2.8 0t2.8 0t2.8 0t2.8 0t2.8 0t2.8 0t2.8 0t2.8 0t2.8 0t2.8 0t2.8 0t2.8 0t2.8 0M1514.6 649.6q1.40 3.7 2.8 0t2.8 0t2.8 0t2.8 0t2.8 0t2.8 0t2.8 0t2.8 0t2.8 0t2.8 0t2.8 0t2.8 0t2.8 0t2.8 0t2.8 0t2.8 0t2.8 0t2.8 0t2.8 0t2.8 0t2.8 0t2.8 0t2.8 0t2.8 0t2.8 0t2.8 0t2.8 0t2.8 0M1674.4 649.6q1.40 3.7 2.8 0t2.8 0t2.8 0t2.8 0t2.8 0t2.8 0t2.8 0t2.8 0t2.8 0t2.8 0t2.8 0t2.8 0t2.8 0t2.8 0t2.8 0t2.8 0t2.8 0t2.8 0t2.8 0t2.8 0t2.8 0t2.8 0t2.8 0t2.8 0t2.8 0t2.8 0t2.8 0t2.8 0t2.8 0t2.8 0t2.8 0t2.8 0t2.8 0t2.8 0t2.8 0t2.8 0M890.5 678.8q1.40 3.7 2.8 0t2.8 0t2.8 0t2.8 0t2.8 0t2.8 0t2.8 0t2.8 0t2.8 0t2.8 0t2.8 0t2.8 0t2.8 0t2.8 0t2.8 0t2.8 0t2.8 0t2.8 0t2.8 0t2.8 0t2.8 0t2.8 0t2.8 0t2.8 0t2.8 0t2.8 0t2.8 0t2.8 0t2.8 0M1059.3 678.8q1.40 3.7 2.8 0t2.8 0t2.8 0t2.8 0t2.8 0t2.8 0t2.8 0t2.8 0t2.8 0t2.8 0t2.8 0t2.8 0t2.8 0t2.8 0t2.8 0t2.8 0M1221.3 678.8q1.40 3.7 2.8 0t2.8 0t2.8 0t2.8 0t2.8 0t2.8 0t2.8 0t2.8 0t2.8 0t2.8 0t2.8 0t2.8 0t2.8 0t2.8 0t2.8 0t2.8 0t2.8 0t2.8 0t2.8 0t2.8 0t2.8 0t2.8 0t2.8 0t2.8 0t2.8 0t2.8 0t2.8 0t2.8 0t2.8 0M1308.9 678.8q1.40 3.7 2.8 0t2.8 0t2.8 0t2.8 0t2.8 0t2.8 0t2.8 0t2.8 0t2.8 0t2.8 0t2.8 0t2.8 0t2.8 0t2.8 0t2.8 0t2.8 0t2.8 0t2.8 0t2.8 0t2.8 0t2.8 0t2.8 0t2.8 0M1379.3 678.8q1.40 3.7 2.8 0t2.8 0t2.8 0t2.8 0t2.8 0t2.8 0t2.8 0t2.8 0t2.8 0t2.8 0t2.8 0t2.8 0t2.8 0t2.8 0t2.8 0t2.8 0t2.8 0t2.8 0t2.8 0t2.8 0t2.8 0t2.8 0t2.8 0M1449.7 678.8q1.40 3.7 2.8 0t2.8 0t2.8 0t2.8 0t2.8 0t2.8 0t2.8 0t2.8 0t2.8 0t2.8 0t2.8 0t2.8 0t2.8 0t2.8 0t2.8 0t2.8 0t2.8 0t2.8 0t2.8 0t2.8 0t2.8 0t2.8 0t2.8 0t2.8 0t2.8 0t2.8 0t2.8 0M1766.1 678.8q1.40 3.7 2.8 0t2.8 0t2.8 0t2.8 0t2.8 0t2.8 0t2.8 0t2.8 0t2.8 0t2.8 0t2.8 0t2.8 0t2.8 0t2.8 0t2.8 0t2.8 0t2.8 0M914.3 708.0q1.40 3.7 2.8 0t2.8 0t2.8 0t2.8 0t2.8 0t2.8 0t2.8 0t2.8 0t2.8 0t2.8 0t2.8 0t2.8 0t2.8 0t2.8 0t2.8 0t2.8 0t2.8 0t2.8 0t2.8 0t2.8 0t2.8 0t2.8 0t2.8 0t2.8 0t2.8 0t2.8 0t2.8 0t2.8 0t2.8 0t2.8 0t2.8 0t2.8 0M1088.1 708.0q1.40 3.7 2.8 0t2.8 0t2.8 0t2.8 0t2.8 0t2.8 0t2.8 0t2.8 0t2.8 0t2.8 0t2.8 0t2.8 0t2.8 0t2.8 0t2.8 0t2.8 0t2.8 0t2.8 0t2.8 0t2.8 0t2.8 0t2.8 0t2.8 0t2.8 0t2.8 0M1165.1 708.0q1.40 3.7 2.8 0t2.8 0t2.8 0t2.8 0t2.8 0t2.8 0t2.8 0t2.8 0t2.8 0t2.8 0t2.8 0t2.8 0t2.8 0t2.8 0t2.8 0t2.8 0M1217.2 708.0q1.40 3.7 2.8 0t2.8 0t2.8 0t2.8 0t2.8 0t2.8 0t2.8 0t2.8 0t2.8 0t2.8 0t2.8 0t2.8 0t2.8 0t2.8 0t2.8 0M1350.1 708.0q1.40 3.7 2.8 0t2.8 0t2.8 0t2.8 0t2.8 0t2.8 0t2.8 0t2.8 0t2.8 0t2.8 0t2.8 0t2.8 0t2.8 0t2.8 0t2.8 0t2.8 0t2.8 0t2.8 0t2.8 0t2.8 0t2.8 0M1416.0 708.0q1.40 3.7 2.8 0t2.8 0t2.8 0t2.8 0t2.8 0t2.8 0t2.8 0t2.8 0t2.8 0t2.8 0t2.8 0t2.8 0t2.8 0t2.8 0t2.8 0t2.8 0t2.8 0t2.8 0t2.8 0M1476.7 708.0q1.40 3.7 2.8 0t2.8 0t2.8 0t2.8 0t2.8 0t2.8 0t2.8 0t2.8 0t2.8 0t2.8 0t2.8 0t2.8 0t2.8 0t2.8 0t2.8 0t2.8 0t2.8 0t2.8 0t2.8 0t2.8 0t2.8 0t2.8 0t2.8 0t2.8 0t2.8 0t2.8 0t2.8 0t2.8 0t2.8 0t2.8 0t2.8 0t2.8 0t2.8 0M1612.1 708.0q1.40 3.7 2.8 0t2.8 0t2.8 0t2.8 0t2.8 0t2.8 0t2.8 0t2.8 0t2.8 0t2.8 0t2.8 0t2.8 0t2.8 0t2.8 0t2.8 0t2.8 0t2.8 0t2.8 0t2.8 0t2.8 0t2.8 0t2.8 0t2.8 0t2.8 0t2.8 0t2.8 0t2.8 0t2.8 0t2.8 0t2.8 0t2.8 0t2.8 0t2.8 0t2.8 0t2.8 0t2.8 0M1748.3 708.0q1.40 3.7 2.8 0t2.8 0t2.8 0t2.8 0t2.8 0t2.8 0t2.8 0t2.8 0t2.8 0t2.8 0t2.8 0t2.8 0t2.8 0t2.8 0t2.8 0t2.8 0t2.8 0t2.8 0M890.5 737.2q1.40 3.7 2.8 0t2.8 0t2.8 0t2.8 0t2.8 0t2.8 0t2.8 0t2.8 0t2.8 0t2.8 0t2.8 0t2.8 0t2.8 0t2.8 0t2.8 0t2.8 0t2.8 0M943.9 737.2q1.40 3.7 2.8 0t2.8 0t2.8 0t2.8 0t2.8 0t2.8 0t2.8 0t2.8 0t2.8 0t2.8 0t2.8 0t2.8 0t2.8 0t2.8 0t2.8 0t2.8 0t2.8 0t2.8 0t2.8 0t2.8 0t2.8 0t2.8 0M1011.5 737.2q1.40 3.7 2.8 0t2.8 0t2.8 0t2.8 0t2.8 0t2.8 0t2.8 0t2.8 0t2.8 0t2.8 0t2.8 0t2.8 0t2.8 0t2.8 0t2.8 0t2.8 0t2.8 0t2.8 0t2.8 0t2.8 0t2.8 0t2.8 0M1130.2 737.2q1.40 3.7 2.8 0t2.8 0t2.8 0t2.8 0t2.8 0t2.8 0t2.8 0t2.8 0t2.8 0t2.8 0t2.8 0t2.8 0t2.8 0t2.8 0t2.8 0t2.8 0t2.8 0t2.8 0t2.8 0t2.8 0t2.8 0t2.8 0t2.8 0t2.8 0t2.8 0t2.8 0t2.8 0t2.8 0M1214.9 737.2q1.40 3.7 2.8 0t2.8 0t2.8 0t2.8 0t2.8 0t2.8 0t2.8 0t2.8 0t2.8 0t2.8 0t2.8 0t2.8 0t2.8 0t2.8 0t2.8 0t2.8 0t2.8 0t2.8 0t2.8 0t2.8 0t2.8 0t2.8 0t2.8 0t2.8 0t2.8 0t2.8 0t2.8 0t2.8 0t2.8 0t2.8 0t2.8 0t2.8 0t2.8 0t2.8 0t2.8 0t2.8 0t2.8 0M1324.4 737.2q1.40 3.7 2.8 0t2.8 0t2.8 0t2.8 0t2.8 0t2.8 0t2.8 0t2.8 0t2.8 0t2.8 0t2.8 0t2.8 0t2.8 0t2.8 0t2.8 0M922.5 1182.2q1.40 3.7 2.8 0t2.8 0t2.8 0t2.8 0t2.8 0t2.8 0t2.8 0t2.8 0t2.8 0t2.8 0t2.8 0t2.8 0t2.8 0t2.8 0t2.8 0t2.8 0t2.8 0t2.8 0M977.5 1182.2q1.40 3.7 2.8 0t2.8 0t2.8 0t2.8 0t2.8 0t2.8 0t2.8 0t2.8 0t2.8 0t2.8 0t2.8 0t2.8 0t2.8 0t2.8 0t2.8 0t2.8 0t2.8 0t2.8 0t2.8 0t2.8 0M1117.2 1182.2q1.40 3.7 2.8 0t2.8 0t2.8 0t2.8 0t2.8 0t2.8 0t2.8 0t2.8 0t2.8 0t2.8 0t2.8 0t2.8 0t2.8 0t2.8 0t2.8 0M1163.8 1182.2q1.40 3.7 2.8 0t2.8 0t2.8 0t2.8 0t2.8 0t2.8 0t2.8 0t2.8 0t2.8 0t2.8 0t2.8 0t2.8 0t2.8 0t2.8 0t2.8 0t2.8 0t2.8 0t2.8 0t2.8 0t2.8 0t2.8 0t2.8 0t2.8 0M1235.1 1182.2q1.40 3.7 2.8 0t2.8 0t2.8 0t2.8 0t2.8 0t2.8 0t2.8 0t2.8 0t2.8 0t2.8 0t2.8 0t2.8 0t2.8 0t2.8 0t2.8 0t2.8 0t2.8 0t2.8 0t2.8 0M1389.7 1182.2q1.40 3.7 2.8 0t2.8 0t2.8 0t2.8 0t2.8 0t2.8 0t2.8 0t2.8 0t2.8 0t2.8 0t2.8 0t2.8 0t2.8 0t2.8 0t2.8 0M1552.6 1182.2q1.40 3.7 2.8 0t2.8 0t2.8 0t2.8 0t2.8 0t2.8 0t2.8 0t2.8 0t2.8 0t2.8 0t2.8 0t2.8 0t2.8 0t2.8 0t2.8 0t2.8 0t2.8 0t2.8 0t2.8 0t2.8 0t2.8 0t2.8 0t2.8 0t2.8 0t2.8 0t2.8 0t2.8 0t2.8 0t2.8 0t2.8 0t2.8 0t2.8 0t2.8 0t2.8 0t2.8 0t2.8 0t2.8 0M1660.8 1182.2q1.40 3.7 2.8 0t2.8 0t2.8 0t2.8 0t2.8 0t2.8 0t2.8 0t2.8 0t2.8 0t2.8 0t2.8 0t2.8 0t2.8 0t2.8 0t2.8 0t2.8 0t2.8 0t2.8 0t2.8 0t2.8 0t2.8 0t2.8 0t2.8 0t2.8 0t2.8 0M1765.1 1182.2q1.40 3.7 2.8 0t2.8 0t2.8 0t2.8 0t2.8 0t2.8 0t2.8 0t2.8 0t2.8 0t2.8 0t2.8 0t2.8 0t2.8 0t2.8 0t2.8 0t2.8 0t2.8 0t2.8 0t2.8 0t2.8 0t2.8 0M890.5 1211.4q1.40 3.7 2.8 0t2.8 0t2.8 0t2.8 0t2.8 0t2.8 0t2.8 0t2.8 0t2.8 0t2.8 0t2.8 0t2.8 0t2.8 0t2.8 0t2.8 0t2.8 0t2.8 0t2.8 0t2.8 0t2.8 0t2.8 0t2.8 0t2.8 0t2.8 0t2.8 0t2.8 0t2.8 0t2.8 0t2.8 0t2.8 0t2.8 0t2.8 0M1016.7 1211.4q1.40 3.7 2.8 0t2.8 0t2.8 0t2.8 0t2.8 0t2.8 0t2.8 0t2.8 0t2.8 0t2.8 0t2.8 0t2.8 0t2.8 0t2.8 0t2.8 0t2.8 0t2.8 0t2.8 0t2.8 0t2.8 0t2.8 0t2.8 0t2.8 0t2.8 0t2.8 0t2.8 0t2.8 0t2.8 0t2.8 0t2.8 0t2.8 0t2.8 0t2.8 0t2.8 0t2.8 0t2.8 0t2.8 0t2.8 0t2.8 0t2.8 0M1134.3 1211.4q1.40 3.7 2.8 0t2.8 0t2.8 0t2.8 0t2.8 0t2.8 0t2.8 0t2.8 0t2.8 0t2.8 0t2.8 0t2.8 0t2.8 0t2.8 0M1179.9 1211.4q1.40 3.7 2.8 0t2.8 0t2.8 0t2.8 0t2.8 0t2.8 0t2.8 0t2.8 0t2.8 0t2.8 0t2.8 0t2.8 0t2.8 0t2.8 0t2.8 0t2.8 0t2.8 0t2.8 0t2.8 0t2.8 0t2.8 0t2.8 0t2.8 0t2.8 0t2.8 0t2.8 0t2.8 0t2.8 0t2.8 0t2.8 0t2.8 0t2.8 0M1276.7 1211.4q1.40 3.7 2.8 0t2.8 0t2.8 0t2.8 0t2.8 0t2.8 0t2.8 0t2.8 0t2.8 0t2.8 0t2.8 0t2.8 0t2.8 0t2.8 0t2.8 0t2.8 0t2.8 0t2.8 0t2.8 0t2.8 0M1365.1 1211.4q1.40 3.7 2.8 0t2.8 0t2.8 0t2.8 0t2.8 0t2.8 0t2.8 0t2.8 0t2.8 0t2.8 0t2.8 0t2.8 0t2.8 0t2.8 0t2.8 0t2.8 0t2.8 0t2.8 0M1422.9 1211.4q1.40 3.7 2.8 0t2.8 0t2.8 0t2.8 0t2.8 0t2.8 0t2.8 0t2.8 0t2.8 0t2.8 0t2.8 0t2.8 0t2.8 0t2.8 0t2.8 0t2.8 0t2.8 0t2.8 0t2.8 0t2.8 0t2.8 0t2.8 0t2.8 0t2.8 0t2.8 0t2.8 0t2.8 0t2.8 0t2.8 0t2.8 0t2.8 0t2.8 0t2.8 0t2.8 0t2.8 0t2.8 0M1554.0 1211.4q1.40 3.7 2.8 0t2.8 0t2.8 0t2.8 0t2.8 0t2.8 0t2.8 0t2.8 0t2.8 0t2.8 0t2.8 0t2.8 0t2.8 0t2.8 0t2.8 0t2.8 0t2.8 0t2.8 0M1610.4 1211.4q1.40 3.7 2.8 0t2.8 0t2.8 0t2.8 0t2.8 0t2.8 0t2.8 0t2.8 0t2.8 0t2.8 0t2.8 0t2.8 0t2.8 0t2.8 0t2.8 0t2.8 0t2.8 0M1664.4 1211.4q1.40 3.7 2.8 0t2.8 0t2.8 0t2.8 0t2.8 0t2.8 0t2.8 0t2.8 0t2.8 0t2.8 0t2.8 0t2.8 0t2.8 0t2.8 0t2.8 0t2.8 0t2.8 0t2.8 0t2.8 0t2.8 0t2.8 0t2.8 0M1733.2 1211.4q1.40 3.7 2.8 0t2.8 0t2.8 0t2.8 0t2.8 0t2.8 0t2.8 0t2.8 0t2.8 0t2.8 0t2.8 0t2.8 0t2.8 0t2.8 0t2.8 0t2.8 0t2.8 0" fill="none" stroke="#d35f78" stroke-width="1.45" stroke-linejoin="round"/><path d="M954.4 502.1H969.0M954.4 504.7H969.0" fill="none" stroke="#5583d4" stroke-width="1.4"/></svg>
</div>
<!--DOC-->

<!-- ================= MENU BAR TEXT ================= -->

<span class="t" style="left:27.50px;top:8.30px;font-size:28px;font-weight:700;color:#0e2c42;letter-spacing:-0.010px;">Word</span>
<span class="t hv" style="left:137.00px;top:8.30px;font-size:28px;color:#0e2c42;letter-spacing:-0.542px;">File</span>
<span class="t hv" style="left:218.50px;top:8.30px;font-size:28px;color:#0e2c42;letter-spacing:-0.083px;">Edit</span>
<span class="t hv" style="left:304.50px;top:8.30px;font-size:28px;color:#0e2c42;letter-spacing:0.604px;">View</span>
<span class="t hv" style="left:404.00px;top:8.30px;font-size:28px;color:#0e2c42;letter-spacing:0.994px;">Insert</span>
<span class="t hv" style="left:516.00px;top:8.30px;font-size:28px;color:#ffffff;letter-spacing:0.562px;">Format</span>
<span class="t hv" style="left:644.50px;top:8.30px;font-size:28px;color:#0e2c42;letter-spacing:0.656px;">Tools</span>
<span class="t hv" style="left:750.50px;top:8.30px;font-size:28px;color:#0e2c42;letter-spacing:0.391px;">Table</span>
<span class="t hv" style="left:856.50px;top:8.30px;font-size:28px;color:#0e2c42;letter-spacing:0.581px;">Window</span>
<span class="t hv" style="left:995.50px;top:8.30px;font-size:28px;color:#0e2c42;letter-spacing:0.802px;">Help</span>
<span class="t" style="left:2239.00px;top:9.60px;font-size:23.8px;color:#0e2c42;letter-spacing:0.980px;">88%</span>

<svg width="2300" height="1193" viewBox="0 0 2300 1193">
 <!-- dropbox -->
 <path d="M1715.3 12 L1724.7 6.4 L1734.1000000000001 12 L1724.7 17.6 Z" fill="#7d97ac"/><path d="M1734.3 12 L1743.7 6.4 L1753.1000000000001 12 L1743.7 17.6 Z" fill="#7d97ac"/><path d="M1715.1 23.9 L1724.5 18.599999999999998 L1733.9 23.9 L1724.5 29.2 Z" fill="#7d97ac"/><path d="M1734.3 23.9 L1743.7 18.599999999999998 L1753.1000000000001 23.9 L1743.7 29.2 Z" fill="#7d97ac"/><path d="M1725.1999999999998 33.4 L1734.6 28.2 L1744.0 33.4 L1734.6 38.6 Z" fill="#7d97ac"/>
 <circle cx="1745" cy="29.4" r="10.4" fill="#c0e1f5"/>
 <circle cx="1745" cy="29.4" r="8.9" fill="#10304a"/>
 <path d="M1741.5 25.9 L1748.5 32.9 M1748.5 25.9 L1741.5 32.9" stroke="#e8f3fb" stroke-width="2.3" stroke-linecap="round"/>
 <!-- onedrive cloud -->
 <clipPath id="cl"><path d="M1773.8 33.6 A7.9 7.9 0 0 1 1770.4 18.6 A8.6 8.6 0 0 1 1777.6 14.6 A10.2 10.2 0 0 1 1796.2 16.2 A8.8 8.8 0 0 1 1797.5 33.6 Z"/></clipPath>
 <g clip-path="url(#cl)">
  <rect x="1760" y="0" width="50" height="40" fill="#6c8aa1"/>
  <path d="M1760 14 L1781 17.5 L1791 24 L1760 36 Z" fill="#486680"/>
  <path d="M1760 33.5 L1797 17.2 L1810 20 V40 H1760 Z" fill="#1d3d56"/>
  <path d="M1760 30 L1783.5 22.8 L1810 31.5 V40 H1760 Z" fill="#10304a"/>
 </g>
 <!-- creative cloud -->
 <circle cx="1824.9" cy="23" r="12.6" fill="#0a0c16"/>
 <circle cx="1836.7" cy="21.2" r="14.2" fill="#0a0c16"/>
 <circle cx="1824.9" cy="23" r="9.2" fill="#c0e1f5"/>
 <circle cx="1836.7" cy="21.2" r="10.8" fill="#c0e1f5"/>
 <circle cx="1837.7" cy="20.6" r="8.3" fill="#0a0c16"/>
 <circle cx="1824.4" cy="24.8" r="6.9" fill="#0a0c16"/>
 <path d="M1826 30.5 L1838 27 L1831 17.5 L1823 19 Z" fill="#0a0c16"/>
 <circle cx="1824.2" cy="25" r="3.1" fill="#c0e1f5"/>
 <path d="M1824.6 24.6 L1828.6 20.2 Q1831.2 17.6 1834 20.2 L1836.2 22.6 Q1838.2 24.4 1840.6 22" fill="none" stroke="#c0e1f5" stroke-width="2.5" stroke-linecap="round"/>
 <!-- spark / arrow -->
 <path d="M1867.2 9.1 H1884.2 L1889.6 14.5 L1891 9.1 H1893.2 L1907.8 20.7 H1877.4 Z" fill="#10304a"/>
 <path d="M1867.2 34.9 H1884.2 L1889.6 29.5 L1891 34.9 H1893.2 L1907.8 23.3 H1877.4 Z" fill="#10304a"/>
 <!-- S shield -->
 <path d="M1933 6.3 H1963 Q1964 6.3 1964 7.3 V28 L1947.9 37.9 L1932 28 V7.3 Q1932 6.3 1933 6.3 Z" fill="#10304a"/>
 <path d="M1956.6 12 H1944.6 Q1939.7 12 1939.7 17.1 Q1939.7 22.3 1944.6 22.3 H1952.4 Q1956.5 22.3 1956.5 24.8 Q1956.5 27.3 1952.4 27.3 H1940.2" fill="none" stroke="#cae4f5" stroke-width="3.5"/>
 <!-- window / command icon -->
 <rect x="1993.4" y="9.3" width="29.2" height="25.4" rx="3" fill="none" stroke="#10304a" stroke-width="2.4"/>
 <path d="M1993.4 13.2 V11.5 Q1993.4 9.3 1996 9.3 H2020 Q2022.6 9.3 2022.6 11.5 V13.2 Z" fill="#10304a" stroke="#10304a" stroke-width="1"/>
 <circle cx="1995.6" cy="11.1" r="1.05" fill="#d5ebf8"/><circle cx="1999.2" cy="11.1" r="1.05" fill="#d5ebf8"/><circle cx="2002.9" cy="11.1" r="1.05" fill="#d5ebf8"/>
 <path d="M2015.25 21.0 A1.9 1.9 0 1 1 2017.1499999999999 22.900000000000002 L2008.95 22.900000000000002 A1.9 1.9 0 1 1 2010.85 21.0 L2010.85 29.200000000000003 A1.9 1.9 0 1 1 2008.95 27.3 L2017.1499999999999 27.3 A1.9 1.9 0 1 1 2015.25 29.200000000000003 Z" fill="none" stroke="#10304a" stroke-width="1.9" stroke-linejoin="round"/>
 <!-- bluetooth (dim) -->
 <path d="M2066 14.5 L2083.4 29.3 L2075 37.2 V8.6 L2083.4 15.4 L2066 30.6" fill="none" stroke="#a6c3d8" stroke-width="1.9"/>
 <!-- wifi -->
 <path d="M2114.85 17.07 A27.5 27.5 0 0 1 2154.75 17.07" fill="none" stroke="#10304a" stroke-width="2.9"/>
 <path d="M2120.51 22.44 A19.7 19.7 0 0 1 2149.09 22.44" fill="none" stroke="#10304a" stroke-width="2.9"/>
 <path d="M2126.31 27.95 A11.7 11.7 0 0 1 2143.29 27.95" fill="none" stroke="#10304a" stroke-width="2.9"/>
 <path d="M2134.8 36.2 L2131 32.4 Q2134.8 29.6 2138.6 32.4 Z" fill="#10304a"/>
 <!-- speaker -->
 <path d="M2177.1 16.1 H2182.6 L2191.7 10 V34.3 L2182.6 27.8 H2177.1 Q2176.1 27.8 2176.1 26.8 V17.1 Q2176.1 16.1 2177.1 16.1 Z" fill="#10304a"/>
 <path d="M2196.4 15.6 Q2201.6 22 2196.4 28.4" fill="none" stroke="#10304a" stroke-width="2.3"/>
 <!-- battery edge -->
 <rect x="2297.8" y="10.4" width="10" height="23.1" rx="3.4" fill="#10304a"/>
</svg>
<!--MENUBAR-->

<!-- ================= TITLE BAR ================= -->

<svg width="2300" height="1193" viewBox="0 0 2300 1193">
 <!-- traffic lights -->
 <defs><linearGradient id="tg" x1="0" y1="0" x2="0" y2="1"><stop offset="0" stop-color="#20376a"/><stop offset="1" stop-color="#34508a"/></linearGradient></defs>
 <circle cx="-3.8" cy="82" r="11.9" fill="#d9d9d9"/>
 <circle cx="36.1" cy="82" r="11.9" fill="#2fc840"/>
 <circle cx="36.1" cy="82" r="11.5" fill="none" stroke="#29b238" stroke-width=".8"/>
 <!-- autosave toggle -->
 <rect x="208" y="68.2" width="79.6" height="27.6" rx="13.8" fill="url(#tg)"/>
 <circle cx="222.1" cy="82" r="12.2" fill="#fbfbfb"/>
 <!-- home -->
 <path d="M312 81 L326.1 69.1 L340.2 81" fill="none" stroke="#ffffff" stroke-width="3.2" stroke-linecap="round"/>
 <path d="M314 84.5 L326.1 74.3 L338.3 84.5 V94.6 Q338.3 96 336.9 96 H330 V87 Q330 85 328 85 H324.2 Q322.2 85 322.2 87 V96 H315.4 Q314 96 314 94.6 Z" fill="#ffffff"/>
 <!-- save (floppy) -->
 <path fill="#ffffff" fill-rule="evenodd" d="M364 68 H388.2 Q390.2 68 390.2 70 V94.1 Q390.2 96.1 388.2 96.1 H367 L362 91.5 V70 Q362 68 364 68 Z M366.1 70.2 H385.9 V79.5 Q385.9 81.5 383.9 81.5 H368.1 Q366.1 81.5 366.1 79.5 Z M370 96.1 V88.3 Q370 86.3 372 86.3 H380.2 Q382.2 86.3 382.2 88.3 V96.1 Z"/>
 <rect x="371.7" y="90.2" width="4.8" height="5.9" fill="#ffffff"/>
 <!-- chevron + partial redo -->
 <path d="M456.8 79.3 L462.3 85.8 L467.8 79.3" fill="none" stroke="#ffffff" stroke-width="1.9"/>
 <path d="M492.6 76 A12.3 12.3 0 0 0 497.4 96.2" fill="none" stroke="#f2f5fb" stroke-width="3"/>
 <!-- doc icon -->
 <path d="M1117.5 66.5 H1131 L1139 74.5 V96 H1117.5 Z" fill="#ffffff"/>
 <path d="M1131 66.5 V74.5 H1139 Z" fill="#c8d6ee"/>
 <rect x="1114" y="75" width="14" height="13" fill="#2b5eb3"/>
 <path d="M1116 78 L1118 85.5 L1120.8 79 L1123.6 85.5 L1125.8 78" fill="none" stroke="#fff" stroke-width="1.5"/>
 <path d="M1130 79.5 H1136.5 M1130 82 H1136.5 M1130 84.5 H1136.5" stroke="#4a70b5" stroke-width="1"/>
 <!-- title chevron -->
 <path d="M1589 78 L1596 84.5 L1603 78" fill="none" stroke="#7f9bd0" stroke-width="2"/>
 <!-- tiny tick under the title bar -->
 <rect x="1296" y="118" width="6" height="2.2" fill="#333"/>
</svg>
<span class="t" style="left:96.00px;top:71.30px;font-size:21.2px;font-weight:700;color:#dce5f5;letter-spacing:0.367px;">AutoSave</span>
<span class="t" style="left:240.30px;top:74.30px;font-size:14.8px;font-weight:700;color:#f4f7fc;letter-spacing:0.953px;">OFF</span>
<span class="t hv" style="left:1151.00px;top:69.70px;font-size:26px;color:#e6edf9;letter-spacing:0.674px;">Test Document</span>
<span class="t hv" style="left:1340.00px;top:69.70px;font-size:26px;color:#8aa4d6;letter-spacing:0.401px;">— Saved to my Mac</span>
<!--TITLEBAR-->

<!-- ================= RIBBON ================= -->

<div class="abs" style="left:-4px;top:126px;width:20px;height:6.5px;border-radius:3.5px;background:#2b579a"></div>
<div class="vdiv" style="left:102px;top:144px;height:123px"></div>
<div class="vdiv" style="left:472.5px;top:224px;height:35px;width:1.5px"></div>
<div class="vdiv" style="left:1008.5px;top:160px;height:36px;width:1.5px"></div>
<div class="vdiv" style="left:1142px;top:160px;height:36px;width:1.5px"></div>
<div class="vdiv" style="left:1224px;top:160px;height:36px;width:1.5px"></div>
<div class="vdiv" style="left:988.5px;top:224px;height:36px;width:1.5px"></div>
<div class="vdiv" style="left:1094px;top:224px;height:36px;width:1.5px"></div>
<div class="vdiv" style="left:1310px;top:145px;height:122px"></div>
<div class="combo" style="left:124px;top:154px;width:197.5px;height:47.5px"></div>
<div class="combo" style="left:326px;top:154px;width:108px;height:47.5px"></div>
<div id="gallery" class="abs"></div>
<div id="card-ring" class="abs"></div>
<div class="card" style="left:1378px"></div>
<div class="card" style="left:1538px"></div>
<div class="card" style="left:1698px"></div>
<div class="card" style="left:1858.5px"></div>
<div class="card" style="left:2018.5px"></div>
<svg width="2300" height="1193" viewBox="0 0 2300 1193">
 <!-- paste (partial) -->
 <rect x="-10" y="179.5" width="14.5" height="33" fill="#fff" stroke="#3b3b3b" stroke-width="2"/>
 <path d="M17.1 180.5 L22.25 186.4 L27.4 180.5" fill="none" stroke="#333" stroke-width="2.7"/>
 <!-- scissors -->
 <path d="M54.2 150.5 L65.5 174 M65.6 150.5 L54.3 174" stroke="#3b3b3b" stroke-width="1.9" fill="none"/>
 <circle cx="53.9" cy="178.2" r="3.2" fill="#f4f4f4" stroke="#2886cc" stroke-width="1.9"/>
 <circle cx="66" cy="178.2" r="3.2" fill="#f4f4f4" stroke="#2886cc" stroke-width="1.9"/>
 <!-- copy -->
 <path d="M52 221.5 H44.8 V195 H55.5 L59.5 199" fill="none" stroke="#3b3b3b" stroke-width="1.8"/>
 <path d="M57 201.5 H68.5 L75 208 V224.5 H57 Z" fill="#fafafa" stroke="#3b3b3b" stroke-width="1.8"/>
 <path d="M68 201.8 V208.5 H74.8" fill="none" stroke="#3b3b3b" stroke-width="1.5"/>
 <path d="M62 214.3 H70 M62 218.8 H70" stroke="#3b3b3b" stroke-width="1.5"/>
 <!-- format painter -->
 <path d="M45.5 252 L61 244 L69.5 255.5 L58.5 266.5 Z" fill="#fbe3c8" stroke="#e88a3c" stroke-width="1.8" stroke-linejoin="round"/>
 <path d="M47 252.5 L58.5 266 L62 262.5 Q53 259 52 250 Z" fill="#f0a35c"/>
 <path d="M60 245.5 L64 241.8 L72.5 251.5 L68.5 255.3 Z" fill="#fff" stroke="#3b3b3b" stroke-width="1.8" stroke-linejoin="round"/>
 <path d="M67 245.5 L72.5 239.5 L75.6 242.3 L70 248.5" fill="#fff" stroke="#3b3b3b" stroke-width="1.8" stroke-linejoin="round"/>
 <!-- combo chevrons -->
 <path d="M302.1 175.5 L307 182.4 L311.9 175.5" fill="none" stroke="#333" stroke-width="2.7"/>
 <path d="M414.1 175.5 L419.25 182.4 L424.4 175.5" fill="none" stroke="#333" stroke-width="2.7"/>
 <path d="M283.1 240 L288.25 246.4 L293.4 240" fill="none" stroke="#333" stroke-width="2.7"/>
 <!-- grow font caret -->
 <path d="M468.5 170 L473 165.2 L477.5 170" fill="none" stroke="#2886cc" stroke-width="1.8"/>
 <!-- underline for U, strike for ab -->
 <rect x="242" y="251.6" width="18" height="1.9" fill="#3b3b3b"/>
 <rect x="312.5" y="243.6" width="31.5" height="1.5" fill="#3b3b3b"/>
 <!-- numbering -->
 <path d="M938.5 164.5 H958 M944.5 177 H958 M950 189.5 H958" stroke="#333" stroke-width="1.95"/>
 <path d="M975.1 176 L980.25 182.4 L985.4 176" fill="none" stroke="#333" stroke-width="2.7"/>
 <!-- outdent -->
 <path d="M1036 164.5 H1064 M1052.5 172.8 H1064 M1052.5 180.8 H1064 M1036 189 H1064" stroke="#333" stroke-width="1.95"/>
 <path d="M1048 176.8 H1037.5 M1042 172.2 L1037.3 176.8 L1042 181.4" fill="none" stroke="#2886cc" stroke-width="1.8"/>
 <!-- indent -->
 <path d="M1088 164.5 H1116 M1104.5 172.8 H1116 M1104.5 180.8 H1116 M1088 189 H1116" stroke="#333" stroke-width="1.95"/>
 <path d="M1088 176.8 H1099 M1094.6 172.2 L1099.3 176.8 L1094.6 181.4" fill="none" stroke="#2886cc" stroke-width="1.8"/>
 <!-- sort arrow -->
 <path d="M1192.8 162.5 V192.5 M1186.8 186.5 L1192.8 193 L1198.8 186.5" fill="none" stroke="#3b3b3b" stroke-width="1.8"/>
 <!-- pilcrow -->
 <path d="M1275.6 167.3 H1263.5 A6.2 6.2 0 0 0 1263.5 179.7 H1265.2 V190 M1265.2 167.3 V190 M1271.8 167.3 V190" fill="none" stroke="#3b3b3b" stroke-width="2"/>
 <path d="M1265.2 167.3 H1263.5 A6.2 6.2 0 0 0 1263.5 179.7 H1265.2 Z" fill="#3b3b3b"/>
 <!-- justify -->
 <path d="M934 229 H962 M934 237.3 H962 M934 245.4 H962 M934 253.4 H962" stroke="#333" stroke-width="1.95"/>
 <!-- line spacing -->
 <path d="M1028.3 229 H1046 M1028.3 237.3 H1046 M1028.3 245.4 H1046 M1028.3 253.4 H1046" stroke="#333" stroke-width="1.95"/>
 <path d="M1018.8 229 V240.3 M1018.8 243.6 V255 M1014.1 233.5 L1018.8 228.6 L1023.5 233.5 M1014.1 250.5 L1018.8 255.4 L1023.5 250.5" fill="none" stroke="#2886cc" stroke-width="2.1"/>
 <path d="M1061.1 240 L1066.25 246.4 L1071.4 240" fill="none" stroke="#333" stroke-width="2.7"/>
 <!-- paint bucket -->
 <path d="M1137.3 229.6 L1125.6 239.6 L1134 248.5 L1145.2 238 Z" fill="#fbfbfb" stroke="#333" stroke-width="1.9" stroke-linejoin="round"/>
 <path d="M1139 236.4 V229.6 Q1139 226.9 1137.1 226.9 Q1135.5 226.9 1135.5 229.2 V230.6" fill="none" stroke="#333" stroke-width="1.7" stroke-linecap="round"/>
 <path d="M1142.4 235.2 Q1148.9 235.6 1148.7 246.6 Q1146.8 240.6 1142.8 238.4 Z" fill="#1f5f99" stroke="#1f5f99" stroke-width=".8" stroke-linejoin="round"/>
 <path d="M1166.6 240 L1171.75 246.4 L1176.9 240" fill="none" stroke="#333" stroke-width="2.7"/>
 <!-- borders -->
 <rect x="1196.5" y="227" width="29" height="26" fill="#f7f7f7"/>
 <path d="M1195.7 227.2 H1226.4 M1195.7 240.3 H1226.4 M1196.8 226.1 V253 M1211 226.1 V253 M1225.2 226.1 V253" stroke="#222" stroke-width="2.1" stroke-dasharray="2.2 2.6" fill="none"/>
 <rect x="1196" y="253.7" width="30" height="2.5" fill="#111"/>
 <path d="M1242.6 240 L1247.75 246.4 L1252.9 240" fill="none" stroke="#333" stroke-width="2.7"/>
 <!-- gallery chevron -->
 <path d="M2183.6 199 L2190.4 204.2 L2183.6 209.4" fill="none" stroke="#333" stroke-width="2.7"/>
 <!-- styles pane icon -->
 <rect x="2217" y="155" width="54" height="53.5" rx="3.5" fill="#f7f7f7" stroke="#3b3b3b" stroke-width="2"/>
 <path d="M2231.5 208.8 Q2240 205.5 2242.4 200.2 Q2247.5 196.6 2252.3 200.4 Q2256.2 205.2 2252 209.6 Q2244 215 2231.5 208.8 Z" fill="#f3f3f3" stroke="#f3f3f3" stroke-width="6" stroke-linejoin="round"/>
 <path d="M2275.9 174.4 Q2277.6 176.2 2275 180 L2256.4 203.6 L2250 198.6 L2270.6 177.2 Q2273.9 173.4 2275.9 174.4 Z" fill="#fdfdfd" stroke="#3b3b3b" stroke-width="1.7" stroke-linejoin="round"/>
 <path d="M2231.5 208.8 Q2240 205.5 2242.4 200.2 Q2247.5 196.6 2252.3 200.4 Q2256.2 205.2 2252 209.6 Q2244 215 2231.5 208.8 Z" fill="#5fa5e6" stroke="#3b83cf" stroke-width="1.4" stroke-linejoin="round"/>
</svg>
<span class="t hv" style="left:-13.50px;top:223.30px;font-size:21px;color:#1a1a1a;letter-spacing:-0.958px;">ste</span>
<span class="t" style="left:136.50px;top:165.50px;font-size:24px;color:#151515;letter-spacing:0.227px;">Calibri (Bo...</span>
<span class="t" style="left:337.50px;top:165.50px;font-size:24px;color:#151515;letter-spacing:-1.703px;">12</span>
<span class="t" style="left:447.00px;top:159.50px;font-size:33px;color:#444;letter-spacing:0.000px;">A</span>
<span class="t" style="left:140.00px;top:227.00px;font-size:26px;font-weight:700;color:#3b3b3b;letter-spacing:0.000px;">B</span>
<span class="t" style="left:193.00px;top:227.50px;font-size:26px;font-family:'Liberation Serif',serif;font-style:italic;color:#3b3b3b;letter-spacing:0.000px;">I</span>
<span class="t" style="left:242.00px;top:226.50px;font-size:25px;color:#3b3b3b;letter-spacing:0.000px;">U</span>
<span class="t" style="left:315.50px;top:230.50px;font-size:23px;color:#3b3b3b;letter-spacing:-0.594px;">ab</span>
<span class="t" style="left:372.50px;top:227.00px;font-size:26px;font-weight:700;color:#3b3b3b;letter-spacing:0.000px;">x</span>
<span class="t" style="left:387.50px;top:247.25px;font-size:12.5px;color:#2886cc;letter-spacing:0.000px;">2</span>
<span class="t" style="left:424.50px;top:227.00px;font-size:26px;font-weight:700;color:#3b3b3b;letter-spacing:0.000px;">x</span>
<span class="t" style="left:439.50px;top:225.55px;font-size:12.5px;color:#2886cc;letter-spacing:0.000px;">2</span>
<span class="t" style="left:928.00px;top:161.25px;font-size:10.5px;font-weight:700;color:#2886cc;letter-spacing:0.000px;">1</span>
<span class="t" style="left:932.50px;top:171.25px;font-size:13.5px;font-weight:700;color:#2886cc;letter-spacing:0.000px;">a</span>
<span class="t" style="left:943.50px;top:184.25px;font-size:11.5px;font-weight:700;color:#2886cc;letter-spacing:0.000px;">i</span>
<span class="t" style="left:1167.50px;top:160.30px;font-size:18px;font-weight:700;color:#2886cc;letter-spacing:0.000px;">A</span>
<span class="t" style="left:1168.00px;top:178.30px;font-size:18px;font-weight:700;color:#3b3b3b;letter-spacing:0.000px;">Z</span>
<span class="t" style="left:1386.00px;top:180.80px;font-size:20.4px;color:#111;letter-spacing:-0.257px;">AaBbCcDdEe</span>
<span class="t" style="left:1546.00px;top:180.80px;font-size:20.4px;color:#111;letter-spacing:-0.257px;">AaBbCcDdEe</span>
<div class="abs" style="left:0;top:0;width:1834.5px;height:300px;overflow:hidden"><span class="t" style="left:1703.50px;top:174.05px;font-size:30.5px;color:#4668a0;transform:scaleX(0.9046);transform-origin:0 0;">AaBbCcDd</span></div>
<div class="abs" style="left:0;top:0;width:1993.5px;height:300px;overflow:hidden"><span class="t" style="left:1864.50px;top:179.30px;font-size:22px;color:#5573a5;letter-spacing:-0.306px;">AaBbCcDdEe</span></div>
<div class="abs" style="left:0;top:0;width:2152px;height:300px;overflow:hidden"><span class="t" style="left:2025.50px;top:163.35px;font-size:49.5px;color:#0c0c0c;transform:scaleX(0.9455);transform-origin:0 0;">AaBb</span><span class="t" style="left:2142.00px;top:163.35px;font-size:49.5px;color:#0c0c0c;">C</span></div>
<span class="t hv" style="left:1416.50px;top:225.05px;font-size:17.7px;color:#151515;letter-spacing:0.997px;">Normal</span>
<span class="t hv" style="left:1558.50px;top:225.05px;font-size:17.7px;color:#151515;letter-spacing:0.894px;">No Spacing</span>
<span class="t hv" style="left:1724.00px;top:225.05px;font-size:17.7px;color:#151515;letter-spacing:0.857px;">Heading 1</span>
<span class="t hv" style="left:1883.50px;top:225.05px;font-size:17.7px;color:#151515;letter-spacing:0.982px;">Heading 2</span>
<span class="t hv" style="left:2069.50px;top:225.05px;font-size:17.7px;color:#151515;letter-spacing:1.184px;">Title</span>
<span class="t hv" style="left:2212.50px;top:225.30px;font-size:20.2px;color:#151515;letter-spacing:1.103px;">Styles</span>
<span class="t hv" style="left:2219.50px;top:249.30px;font-size:20.2px;color:#151515;letter-spacing:-0.052px;">Pane</span>
<!--RIBBON-->

<!-- ================= DROPDOWN MENU ================= -->
<div id="menu" class="abs"></div>

<span class="t hv" style="left:540.50px;top:57.00px;font-size:27px;color:#0c1734;letter-spacing:0.578px;">Font...</span>
<span class="t hv" style="left:540.50px;top:95.00px;font-size:27px;color:#0e1936;letter-spacing:0.923px;">Text Effects...</span>
<span class="t hv" style="left:540.50px;top:133.00px;font-size:27px;color:#141d36;letter-spacing:0.582px;">Paragraph...</span>
<span class="t hv" style="left:540.50px;top:171.00px;font-size:27px;color:#1b2236;letter-spacing:0.994px;">Document...</span>
<span class="t hv" style="left:540.50px;top:233.00px;font-size:27px;color:#23262f;letter-spacing:0.906px;">Bullets and Numbering...</span>
<span class="t hv" style="left:540.50px;top:271.00px;font-size:27px;color:#25272e;letter-spacing:0.777px;">Borders and Shading...</span>
<span class="t hv" style="left:540.50px;top:333.00px;font-size:27px;color:#28292e;letter-spacing:0.773px;">Columns...</span>
<span class="t hv" style="left:540.50px;top:371.00px;font-size:27px;color:#28292e;letter-spacing:0.659px;">Tabs...</span>
<span class="t hv" style="left:540.50px;top:409.00px;font-size:27px;color:#28292e;letter-spacing:0.694px;">Drop Cap...</span>
<span class="t hv" style="left:540.50px;top:447.00px;font-size:27px;color:#28292e;letter-spacing:0.567px;">Change Case...</span>
<span class="t hv" style="left:540.50px;top:509.00px;font-size:27px;color:#28292e;letter-spacing:0.710px;">Style...</span>
<span class="t hv" style="left:540.50px;top:571.00px;font-size:27px;color:#28292e;letter-spacing:0.993px;">Font Substitution...</span>
<span class="t hv" style="left:540.50px;top:633.00px;font-size:27px;color:#28292e;letter-spacing:0.825px;">Equation Options...</span>
<div class="sep" style="top:215px"></div>
<div class="sep" style="top:315px"></div>
<div class="sep" style="top:491px"></div>
<div class="sep" style="top:553px"></div>
<div class="sep" style="top:615px"></div>
<svg width="2300" height="1193" viewBox="0 0 2300 1193">
 <path d="M877.5999999999999 63.099999999999994 A2.9 2.9 0 1 1 880.5 66.0 L867.0999999999999 66.0 A2.9 2.9 0 1 1 870.0 63.099999999999994 L870.0 76.5 A2.9 2.9 0 1 1 867.0999999999999 73.6 L880.5 73.6 A2.9 2.9 0 1 1 877.5999999999999 76.5 Z" fill="none" stroke="#0c1734" stroke-width="2.5" stroke-linejoin="round"/>
 <path d="M877.5999999999999 138.9 A2.9 2.9 0 1 1 880.5 141.79999999999998 L867.0999999999999 141.79999999999998 A2.9 2.9 0 1 1 870.0 138.9 L870.0 152.29999999999998 A2.9 2.9 0 1 1 867.0999999999999 149.4 L880.5 149.4 A2.9 2.9 0 1 1 877.5999999999999 152.29999999999998 Z" fill="none" stroke="#141d36" stroke-width="2.5" stroke-linejoin="round"/>
 <path d="M832 137.4 H840.8 L849 154 H856 M846.5 137.4 H856" fill="none" stroke="#141d36" stroke-width="2.5"/>
</svg>
<span class="t hv" style="left:888.80px;top:57.00px;font-size:27px;color:#0c1734;letter-spacing:0.000px;">D</span>
<span class="t hv" style="left:888.60px;top:133.00px;font-size:27px;color:#141d36;letter-spacing:0.000px;">M</span>
<!--MENU-->

<!-- ================= ANNOTATIONS ================= -->

<svg width="2300" height="1193" viewBox="0 0 2300 1193">
 <defs><filter id="ash" x="-10%" y="-10%" width="120%" height="130%"><feGaussianBlur in="SourceAlpha" stdDeviation="3"/><feOffset dx="0" dy="3"/><feComponentTransfer><feFuncA type="linear" slope="0.35"/></feComponentTransfer><feMerge><feMergeNode/><feMergeNode in="SourceGraphic"/></feMerge></filter></defs>
 <path filter="url(#ash)" d="M472.8 45 L388.7 58.1 L404.4 71.2 Q353.4 124 290.6 168.6 Q287.4 171.4 289.8 174 Q292.2 176.4 296 173.8 Q359.3 142.3 425.6 101.2 L432.7 121 Z" fill="#fb2c0c"/>
</svg>
<div id="redbox" class="abs"></div>
<!--ANNOT-->

</body>
</html>
